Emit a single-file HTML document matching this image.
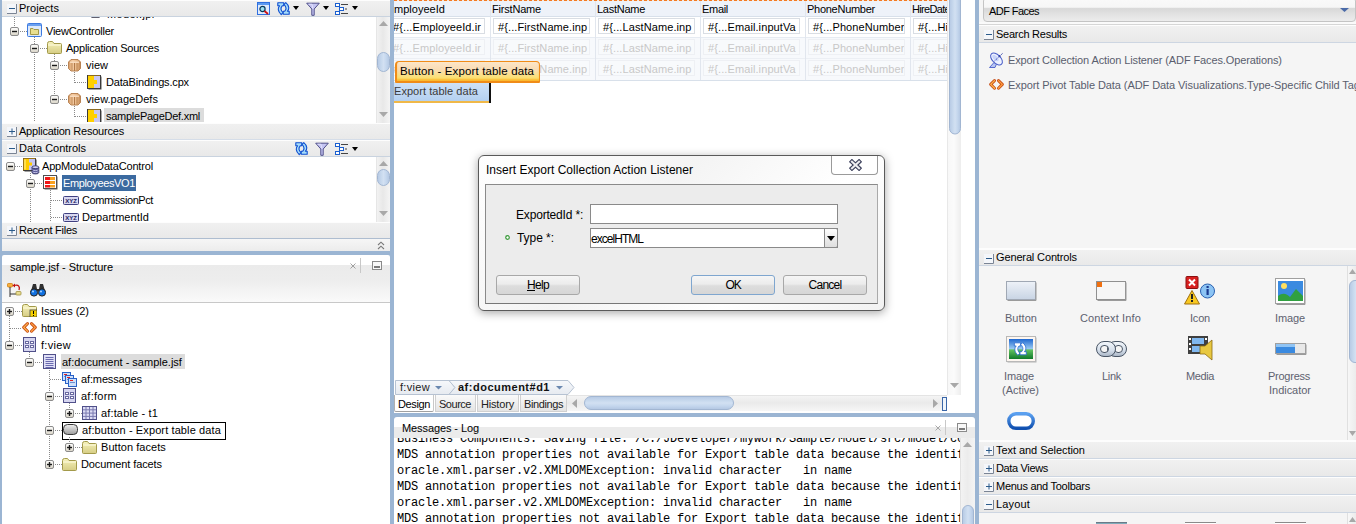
<!DOCTYPE html>
<html><head><meta charset="utf-8"><style>
html,body{margin:0;padding:0;width:1356px;height:524px;overflow:hidden;background:#9bb5d3;}
body>div,body>svg{position:absolute;box-sizing:border-box;}
body{font-family:"Liberation Sans",sans-serif;position:relative;}
</style></head><body>
<div style="left:0px;top:0px;width:2px;height:255px;background:#9bb5d3"></div>
<div style="left:2px;top:0px;width:388px;height:16px;background:linear-gradient(#fdfdfd 0 1px,#f0f0f0 1px,#e9e9e9)"></div>
<div style="left:2px;top:16px;width:388px;height:1px;background:#c9d3df"></div>
<svg style="left:7px;top:4px;" width="10" height="10" viewBox="0 0 10 10"><rect x="0" y="0" width="10" height="10" fill="#f4f6fa"/><path d="M9.5 0 L9.5 9.5 L0 9.5" fill="none" stroke="#7a8494"/><rect x="2" y="4" width="6" height="1" fill="#2a5a8a"/></svg>
<div style="left:19px;top:3px;font-family:'Liberation Sans';font-size:11px;line-height:11px;color:#000;white-space:pre;letter-spacing:0.031px;">Projects</div>
<svg style="left:257px;top:2px;" width="14" height="14" viewBox="0 0 14 14"><rect x="0.5" y="0.5" width="12" height="12" fill="#dfeafc" stroke="#2f6fe0"/><rect x="1" y="1" width="11" height="2" fill="#5c9af0"/><circle cx="5.5" cy="7" r="2.6" fill="#9ee0f0" stroke="#0a3a5a" stroke-width="1.2"/><line x1="7.5" y1="9" x2="11" y2="12" stroke="#d01010" stroke-width="1.8"/></svg>
<svg style="left:277px;top:2px;" width="14" height="14" viewBox="0 0 14 14"><path d="M0.8 0.8 L6.8 0.8 L6.8 3.8 L5.2 3.8 C3.6 5.6 3.6 8.2 6 10.6 L4.2 12.6 C0.6 9.4 0.6 5.6 2.6 3.8 L0.8 3.8 Z" fill="#a6dcfa" stroke="#0f4fd0" stroke-width="1.1" stroke-linejoin="round"/><path d="M12.2 12.2 L6.2 12.2 L6.2 9.2 L7.8 9.2 C9.4 7.4 9.4 4.8 7 2.4 L8.8 0.6 C12.4 3.6 12.4 7.4 10.4 9.2 L12.2 9.2 Z" fill="#a6dcfa" stroke="#0f4fd0" stroke-width="1.1" stroke-linejoin="round"/></svg>
<svg style="left:293px;top:6px;" width="6" height="4" viewBox="0 0 6 4"><path d="M0 0 L6 0 L3 4 Z" fill="#000"/></svg>
<svg style="left:306px;top:2px;" width="14" height="14" viewBox="0 0 14 14"><path d="M0.7 1.2 L13.3 1.2 L8.2 7 L8.2 13.3 L5.8 13.3 L5.8 7 Z" fill="#c4c4f2" stroke="#50508a" stroke-width="1"/><path d="M2.5 2.2 L6 2.2 L6.8 6.5" fill="none" stroke="#e8e8ff" stroke-width="0.8"/></svg>
<svg style="left:323px;top:6px;" width="6" height="4" viewBox="0 0 6 4"><path d="M0 0 L6 0 L3 4 Z" fill="#000"/></svg>
<svg style="left:335px;top:2px;" width="14" height="14" viewBox="0 0 14 14"><rect x="0.5" y="1.5" width="4" height="3" fill="#fff" stroke="#1a5fd0"/><rect x="4.5" y="5.5" width="4" height="3" fill="#fff" stroke="#1a5fd0"/><rect x="0.5" y="9.5" width="4" height="3" fill="#fff" stroke="#1a5fd0"/><rect x="6" y="2" width="7" height="1" fill="#444"/><rect x="10" y="6.5" width="2" height="1" fill="#444"/><rect x="6" y="11" width="7" height="1" fill="#444"/></svg>
<svg style="left:352px;top:6px;" width="6" height="4" viewBox="0 0 6 4"><path d="M0 0 L6 0 L3 4 Z" fill="#000"/></svg>
<div style="left:2px;top:17px;width:374px;height:106px;background:#fff"></div>
<div style="left:2px;top:17px;width:374px;height:6px;overflow:hidden"><svg style="position:absolute;left:86px;top:-12px" width="16" height="14" viewBox="0 0 16 14"><path d="M1 3 L4 0.5 L11 0.5 L14 3 L14 10 L11 12.5 L4 12.5 L1 10 Z" fill="#d8d8e0" stroke="#606070"/><circle cx="5" cy="9" r="2.5" fill="#b0b0c0" stroke="#404050"/><circle cx="10" cy="9" r="2.5" fill="#b0b0c0" stroke="#404050"/></svg><div style="position:absolute;left:105px;top:-8px;font-family:'Liberation Sans';font-size:11px;line-height:11px;white-space:pre;color:#000;letter-spacing:0.4px">Model.jpr</div></div>
<div style="left:14px;top:17px;width:1px;height:1px;background:#8a8a8a"></div>
<div style="left:14px;top:19px;width:1px;height:1px;background:#8a8a8a"></div>
<div style="left:14px;top:21px;width:1px;height:1px;background:#8a8a8a"></div>
<div style="left:14px;top:23px;width:1px;height:1px;background:#8a8a8a"></div>
<div style="left:14px;top:25px;width:1px;height:1px;background:#8a8a8a"></div>
<svg style="left:10px;top:27px;" width="9" height="9" viewBox="0 0 9 9"><defs><linearGradient id="eg" x1="0" y1="0" x2="0" y2="1"><stop offset="0" stop-color="#ffffff"/><stop offset="1" stop-color="#d9d4c6"/></linearGradient></defs><rect x="0.5" y="0.5" width="8" height="8" rx="1.5" fill="url(#eg)" stroke="#8c8c8c"/><rect x="2" y="3.8" width="5" height="1.4" fill="#1a1a1a"/></svg>
<div style="left:20px;top:31px;width:1px;height:1px;background:#8a8a8a"></div>
<div style="left:22px;top:31px;width:1px;height:1px;background:#8a8a8a"></div>
<div style="left:24px;top:31px;width:1px;height:1px;background:#8a8a8a"></div>
<div style="left:26px;top:31px;width:1px;height:1px;background:#8a8a8a"></div>
<svg style="left:27px;top:23px;" width="15" height="14" viewBox="0 0 15 14"><rect x="0.5" y="0.5" width="14" height="13" rx="1" fill="#dce9fb" stroke="#3d7ae0"/><rect x="1" y="1" width="13" height="2" fill="#6aa0f0"/><path d="M3.5 5.5 L6 5.5 L7 6.5 L11.5 6.5 L11.5 11.5 L3.5 11.5 Z" fill="#e8df90" stroke="#a39a4a"/></svg>
<div style="left:46px;top:26px;font-family:'Liberation Sans';font-size:11px;line-height:11px;color:#000;white-space:pre;letter-spacing:-0.238px;">ViewController</div>
<div style="left:34px;top:37px;width:1px;height:1px;background:#8a8a8a"></div>
<div style="left:34px;top:39px;width:1px;height:1px;background:#8a8a8a"></div>
<div style="left:34px;top:41px;width:1px;height:1px;background:#8a8a8a"></div>
<div style="left:34px;top:43px;width:1px;height:1px;background:#8a8a8a"></div>
<svg style="left:30px;top:44px;" width="9" height="9" viewBox="0 0 9 9"><defs><linearGradient id="eg" x1="0" y1="0" x2="0" y2="1"><stop offset="0" stop-color="#ffffff"/><stop offset="1" stop-color="#d9d4c6"/></linearGradient></defs><rect x="0.5" y="0.5" width="8" height="8" rx="1.5" fill="url(#eg)" stroke="#8c8c8c"/><rect x="2" y="3.8" width="5" height="1.4" fill="#1a1a1a"/></svg>
<div style="left:40px;top:48px;width:1px;height:1px;background:#8a8a8a"></div>
<div style="left:42px;top:48px;width:1px;height:1px;background:#8a8a8a"></div>
<div style="left:44px;top:48px;width:1px;height:1px;background:#8a8a8a"></div>
<div style="left:46px;top:48px;width:1px;height:1px;background:#8a8a8a"></div>
<svg style="left:47px;top:41px;" width="15" height="13" viewBox="0 0 15 13"><defs><linearGradient id="fg" x1="0" y1="0" x2="0" y2="1"><stop offset="0" stop-color="#f6f2bc"/><stop offset="1" stop-color="#d6cd84"/></linearGradient></defs><path d="M0.5 2.5 Q0.5 0.5 2.5 0.5 L5.5 0.5 L7 2.5 L13.5 2.5 Q14.5 2.5 14.5 3.5 L14.5 11.5 Q14.5 12.5 13.5 12.5 L1.5 12.5 Q0.5 12.5 0.5 11.5 Z" fill="url(#fg)" stroke="#a39a4a"/><line x1="1" y1="4" x2="14" y2="4" stroke="#fffbe0" stroke-width="1"/></svg>
<div style="left:66px;top:43px;font-family:'Liberation Sans';font-size:11px;line-height:11px;color:#000;white-space:pre;letter-spacing:-0.225px;">Application Sources</div>
<div style="left:34px;top:54px;width:1px;height:1px;background:#8a8a8a"></div>
<div style="left:34px;top:56px;width:1px;height:1px;background:#8a8a8a"></div>
<div style="left:34px;top:58px;width:1px;height:1px;background:#8a8a8a"></div>
<div style="left:34px;top:60px;width:1px;height:1px;background:#8a8a8a"></div>
<div style="left:34px;top:62px;width:1px;height:1px;background:#8a8a8a"></div>
<div style="left:34px;top:64px;width:1px;height:1px;background:#8a8a8a"></div>
<div style="left:34px;top:66px;width:1px;height:1px;background:#8a8a8a"></div>
<div style="left:34px;top:68px;width:1px;height:1px;background:#8a8a8a"></div>
<div style="left:34px;top:70px;width:1px;height:1px;background:#8a8a8a"></div>
<div style="left:34px;top:72px;width:1px;height:1px;background:#8a8a8a"></div>
<div style="left:34px;top:74px;width:1px;height:1px;background:#8a8a8a"></div>
<div style="left:34px;top:76px;width:1px;height:1px;background:#8a8a8a"></div>
<div style="left:34px;top:78px;width:1px;height:1px;background:#8a8a8a"></div>
<div style="left:34px;top:80px;width:1px;height:1px;background:#8a8a8a"></div>
<div style="left:34px;top:82px;width:1px;height:1px;background:#8a8a8a"></div>
<div style="left:34px;top:84px;width:1px;height:1px;background:#8a8a8a"></div>
<div style="left:34px;top:86px;width:1px;height:1px;background:#8a8a8a"></div>
<div style="left:34px;top:88px;width:1px;height:1px;background:#8a8a8a"></div>
<div style="left:34px;top:90px;width:1px;height:1px;background:#8a8a8a"></div>
<div style="left:34px;top:92px;width:1px;height:1px;background:#8a8a8a"></div>
<div style="left:34px;top:94px;width:1px;height:1px;background:#8a8a8a"></div>
<div style="left:34px;top:96px;width:1px;height:1px;background:#8a8a8a"></div>
<div style="left:34px;top:98px;width:1px;height:1px;background:#8a8a8a"></div>
<div style="left:34px;top:100px;width:1px;height:1px;background:#8a8a8a"></div>
<div style="left:34px;top:102px;width:1px;height:1px;background:#8a8a8a"></div>
<div style="left:34px;top:104px;width:1px;height:1px;background:#8a8a8a"></div>
<div style="left:34px;top:106px;width:1px;height:1px;background:#8a8a8a"></div>
<div style="left:34px;top:108px;width:1px;height:1px;background:#8a8a8a"></div>
<div style="left:34px;top:110px;width:1px;height:1px;background:#8a8a8a"></div>
<div style="left:34px;top:112px;width:1px;height:1px;background:#8a8a8a"></div>
<div style="left:34px;top:114px;width:1px;height:1px;background:#8a8a8a"></div>
<div style="left:34px;top:116px;width:1px;height:1px;background:#8a8a8a"></div>
<div style="left:34px;top:118px;width:1px;height:1px;background:#8a8a8a"></div>
<div style="left:34px;top:120px;width:1px;height:1px;background:#8a8a8a"></div>
<div style="left:34px;top:122px;width:1px;height:1px;background:#8a8a8a"></div>
<div style="left:54px;top:54px;width:1px;height:1px;background:#8a8a8a"></div>
<div style="left:54px;top:56px;width:1px;height:1px;background:#8a8a8a"></div>
<div style="left:54px;top:58px;width:1px;height:1px;background:#8a8a8a"></div>
<div style="left:54px;top:60px;width:1px;height:1px;background:#8a8a8a"></div>
<svg style="left:50px;top:61px;" width="9" height="9" viewBox="0 0 9 9"><defs><linearGradient id="eg" x1="0" y1="0" x2="0" y2="1"><stop offset="0" stop-color="#ffffff"/><stop offset="1" stop-color="#d9d4c6"/></linearGradient></defs><rect x="0.5" y="0.5" width="8" height="8" rx="1.5" fill="url(#eg)" stroke="#8c8c8c"/><rect x="2" y="3.8" width="5" height="1.4" fill="#1a1a1a"/></svg>
<div style="left:60px;top:65px;width:1px;height:1px;background:#8a8a8a"></div>
<div style="left:62px;top:65px;width:1px;height:1px;background:#8a8a8a"></div>
<div style="left:64px;top:65px;width:1px;height:1px;background:#8a8a8a"></div>
<div style="left:66px;top:65px;width:1px;height:1px;background:#8a8a8a"></div>
<svg style="left:68px;top:59px;" width="13" height="13" viewBox="0 0 13 13"><defs><linearGradient id="pg" x1="0" y1="0" x2="1" y2="0"><stop offset="0" stop-color="#d49a64"/><stop offset="0.35" stop-color="#f4cca4"/><stop offset="0.7" stop-color="#e8b888"/><stop offset="1" stop-color="#c08652"/></linearGradient></defs><path d="M3 0.5 L10 0.5 L12.5 3 L12.5 9.5 L10 12 L3 12 L0.5 9.5 L0.5 3 Z" fill="url(#pg)" stroke="#b37a48" stroke-width="0.9"/><path d="M2 3.2 L11 3.2" stroke="#fbe2c8" stroke-width="1.2"/><line x1="4" y1="4" x2="4" y2="11.5" stroke="#b8824e" stroke-width="0.9"/><line x1="6.5" y1="4" x2="6.5" y2="12" stroke="#a87040" stroke-width="0.9"/><line x1="9" y1="4" x2="9" y2="11.5" stroke="#b8824e" stroke-width="0.9"/></svg>
<div style="left:86px;top:60px;font-family:'Liberation Sans';font-size:11px;line-height:11px;color:#000;white-space:pre;letter-spacing:0.000px;">view</div>
<div style="left:74px;top:72px;width:1px;height:1px;background:#8a8a8a"></div>
<div style="left:74px;top:74px;width:1px;height:1px;background:#8a8a8a"></div>
<div style="left:74px;top:76px;width:1px;height:1px;background:#8a8a8a"></div>
<div style="left:74px;top:78px;width:1px;height:1px;background:#8a8a8a"></div>
<div style="left:74px;top:80px;width:1px;height:1px;background:#8a8a8a"></div>
<div style="left:74px;top:82px;width:1px;height:1px;background:#8a8a8a"></div>
<div style="left:75px;top:82px;width:1px;height:1px;background:#8a8a8a"></div>
<div style="left:77px;top:82px;width:1px;height:1px;background:#8a8a8a"></div>
<div style="left:79px;top:82px;width:1px;height:1px;background:#8a8a8a"></div>
<div style="left:81px;top:82px;width:1px;height:1px;background:#8a8a8a"></div>
<div style="left:83px;top:82px;width:1px;height:1px;background:#8a8a8a"></div>
<div style="left:85px;top:82px;width:1px;height:1px;background:#8a8a8a"></div>
<svg style="left:87px;top:75px;" width="15" height="15" viewBox="0 0 15 15"><rect x="1.5" y="1.5" width="13" height="13" fill="#505050"/><rect x="0.5" y="0.5" width="13" height="13" fill="#c8c8f4" stroke="#3a3a3a"/><path d="M1 1 L7 1 L7 5 L10 5 L10 9 L7 9 L7 13 L1 13 Z" fill="#ffd000"/><line x1="1" y1="0.5" x2="13" y2="0.5" stroke="#8a6a20"/></svg>
<div style="left:106px;top:77px;font-family:'Liberation Sans';font-size:11px;line-height:11px;color:#000;white-space:pre;letter-spacing:-0.166px;">DataBindings.cpx</div>
<div style="left:54px;top:71px;width:1px;height:1px;background:#8a8a8a"></div>
<div style="left:54px;top:73px;width:1px;height:1px;background:#8a8a8a"></div>
<div style="left:54px;top:75px;width:1px;height:1px;background:#8a8a8a"></div>
<div style="left:54px;top:77px;width:1px;height:1px;background:#8a8a8a"></div>
<div style="left:54px;top:79px;width:1px;height:1px;background:#8a8a8a"></div>
<div style="left:54px;top:81px;width:1px;height:1px;background:#8a8a8a"></div>
<div style="left:54px;top:83px;width:1px;height:1px;background:#8a8a8a"></div>
<div style="left:54px;top:85px;width:1px;height:1px;background:#8a8a8a"></div>
<div style="left:54px;top:87px;width:1px;height:1px;background:#8a8a8a"></div>
<div style="left:54px;top:89px;width:1px;height:1px;background:#8a8a8a"></div>
<div style="left:54px;top:91px;width:1px;height:1px;background:#8a8a8a"></div>
<div style="left:54px;top:93px;width:1px;height:1px;background:#8a8a8a"></div>
<svg style="left:50px;top:95px;" width="9" height="9" viewBox="0 0 9 9"><defs><linearGradient id="eg" x1="0" y1="0" x2="0" y2="1"><stop offset="0" stop-color="#ffffff"/><stop offset="1" stop-color="#d9d4c6"/></linearGradient></defs><rect x="0.5" y="0.5" width="8" height="8" rx="1.5" fill="url(#eg)" stroke="#8c8c8c"/><rect x="2" y="3.8" width="5" height="1.4" fill="#1a1a1a"/></svg>
<div style="left:60px;top:99px;width:1px;height:1px;background:#8a8a8a"></div>
<div style="left:62px;top:99px;width:1px;height:1px;background:#8a8a8a"></div>
<div style="left:64px;top:99px;width:1px;height:1px;background:#8a8a8a"></div>
<div style="left:66px;top:99px;width:1px;height:1px;background:#8a8a8a"></div>
<svg style="left:68px;top:93px;" width="13" height="13" viewBox="0 0 13 13"><defs><linearGradient id="pg" x1="0" y1="0" x2="1" y2="0"><stop offset="0" stop-color="#d49a64"/><stop offset="0.35" stop-color="#f4cca4"/><stop offset="0.7" stop-color="#e8b888"/><stop offset="1" stop-color="#c08652"/></linearGradient></defs><path d="M3 0.5 L10 0.5 L12.5 3 L12.5 9.5 L10 12 L3 12 L0.5 9.5 L0.5 3 Z" fill="url(#pg)" stroke="#b37a48" stroke-width="0.9"/><path d="M2 3.2 L11 3.2" stroke="#fbe2c8" stroke-width="1.2"/><line x1="4" y1="4" x2="4" y2="11.5" stroke="#b8824e" stroke-width="0.9"/><line x1="6.5" y1="4" x2="6.5" y2="12" stroke="#a87040" stroke-width="0.9"/><line x1="9" y1="4" x2="9" y2="11.5" stroke="#b8824e" stroke-width="0.9"/></svg>
<div style="left:86px;top:94px;font-family:'Liberation Sans';font-size:11px;line-height:11px;color:#000;white-space:pre;letter-spacing:0.032px;">view.pageDefs</div>
<div style="left:74px;top:106px;width:1px;height:1px;background:#8a8a8a"></div>
<div style="left:74px;top:108px;width:1px;height:1px;background:#8a8a8a"></div>
<div style="left:74px;top:110px;width:1px;height:1px;background:#8a8a8a"></div>
<div style="left:74px;top:112px;width:1px;height:1px;background:#8a8a8a"></div>
<div style="left:74px;top:114px;width:1px;height:1px;background:#8a8a8a"></div>
<div style="left:74px;top:116px;width:1px;height:1px;background:#8a8a8a"></div>
<div style="left:75px;top:116px;width:1px;height:1px;background:#8a8a8a"></div>
<div style="left:77px;top:116px;width:1px;height:1px;background:#8a8a8a"></div>
<div style="left:79px;top:116px;width:1px;height:1px;background:#8a8a8a"></div>
<div style="left:81px;top:116px;width:1px;height:1px;background:#8a8a8a"></div>
<div style="left:83px;top:116px;width:1px;height:1px;background:#8a8a8a"></div>
<div style="left:85px;top:116px;width:1px;height:1px;background:#8a8a8a"></div>
<svg style="left:87px;top:109px;" width="15" height="15" viewBox="0 0 15 15"><rect x="1.5" y="1.5" width="13" height="13" fill="#505050"/><rect x="0.5" y="0.5" width="13" height="13" fill="#c8c8f4" stroke="#3a3a3a"/><path d="M1 1 L7 1 L7 5 L10 5 L10 9 L7 9 L7 13 L1 13 Z" fill="#ffd000"/><line x1="1" y1="0.5" x2="13" y2="0.5" stroke="#8a6a20"/></svg>
<div style="left:104px;top:108px;width:100px;height:15px;background:#dcdcdc"></div>
<div style="left:106px;top:111px;font-family:'Liberation Sans';font-size:11px;line-height:11px;color:#000;white-space:pre;letter-spacing:-0.263px;">samplePageDef.xml</div>
<div style="left:2px;top:122px;width:374px;height:1px;background:#fff"></div>
<div style="left:376px;top:17px;width:14px;height:106px;background:linear-gradient(90deg,#f4f4f4,#e8e8e8 50%,#f4f4f4)"></div>
<div style="left:376px;top:17px;width:1px;height:106px;background:#e6e6e6"></div>
<svg style="left:379px;top:21px;" width="9" height="5" viewBox="0 0 9 5"><path d="M0 5 L4.5 0 L9 5 Z" fill="#a8a8a8"/></svg>
<svg style="left:379px;top:112px;" width="9" height="5" viewBox="0 0 9 5"><path d="M0 0 L4.5 5 L9 0 Z" fill="#a8a8a8"/></svg>
<svg style="left:377px;top:52px;" width="13" height="20" viewBox="0 0 13 20"><defs><linearGradient id="tg52" x1="0" y1="0" x2="1" y2="0"><stop offset="0" stop-color="#b6c9e4"/><stop offset="0.35" stop-color="#c9daee"/><stop offset="0.5" stop-color="#d2e0f2"/><stop offset="0.7" stop-color="#c6d8ee"/><stop offset="1" stop-color="#b2c6e2"/></linearGradient></defs><rect x="0.5" y="0.5" width="12" height="19" rx="6" fill="url(#tg52)" stroke="#a2b6d2"/></svg>
<div style="left:2px;top:123px;width:388px;height:16px;background:linear-gradient(#fdfdfd 0 1px,#f0f0f0 1px,#e9e9e9)"></div>
<div style="left:2px;top:139px;width:388px;height:1px;background:#d5dde8"></div>
<svg style="left:7px;top:127px;" width="10" height="10" viewBox="0 0 10 10"><rect x="0" y="0" width="10" height="10" fill="#f4f6fa"/><path d="M9.5 0 L9.5 9.5 L0 9.5" fill="none" stroke="#7a8494"/><rect x="2" y="4" width="6" height="1" fill="#2a5a8a"/><rect x="4.5" y="1.5" width="1" height="6" fill="#2a5a8a"/></svg>
<div style="left:19px;top:126px;font-family:'Liberation Sans';font-size:11px;line-height:11px;color:#000;white-space:pre;letter-spacing:-0.214px;">Application Resources</div>
<div style="left:2px;top:140px;width:388px;height:16px;background:linear-gradient(#fdfdfd 0 1px,#f0f0f0 1px,#e9e9e9)"></div>
<div style="left:2px;top:156px;width:388px;height:1px;background:#c9d3df"></div>
<svg style="left:7px;top:144px;" width="10" height="10" viewBox="0 0 10 10"><rect x="0" y="0" width="10" height="10" fill="#f4f6fa"/><path d="M9.5 0 L9.5 9.5 L0 9.5" fill="none" stroke="#7a8494"/><rect x="2" y="4" width="6" height="1" fill="#2a5a8a"/></svg>
<div style="left:19px;top:143px;font-family:'Liberation Sans';font-size:11px;line-height:11px;color:#000;white-space:pre;letter-spacing:-0.022px;">Data Controls</div>
<svg style="left:295px;top:142px;" width="14" height="14" viewBox="0 0 14 14"><path d="M0.8 0.8 L6.8 0.8 L6.8 3.8 L5.2 3.8 C3.6 5.6 3.6 8.2 6 10.6 L4.2 12.6 C0.6 9.4 0.6 5.6 2.6 3.8 L0.8 3.8 Z" fill="#a6dcfa" stroke="#0f4fd0" stroke-width="1.1" stroke-linejoin="round"/><path d="M12.2 12.2 L6.2 12.2 L6.2 9.2 L7.8 9.2 C9.4 7.4 9.4 4.8 7 2.4 L8.8 0.6 C12.4 3.6 12.4 7.4 10.4 9.2 L12.2 9.2 Z" fill="#a6dcfa" stroke="#0f4fd0" stroke-width="1.1" stroke-linejoin="round"/></svg>
<svg style="left:315px;top:142px;" width="14" height="14" viewBox="0 0 14 14"><path d="M0.7 1.2 L13.3 1.2 L8.2 7 L8.2 13.3 L5.8 13.3 L5.8 7 Z" fill="#c4c4f2" stroke="#50508a" stroke-width="1"/><path d="M2.5 2.2 L6 2.2 L6.8 6.5" fill="none" stroke="#e8e8ff" stroke-width="0.8"/></svg>
<svg style="left:335px;top:142px;" width="14" height="14" viewBox="0 0 14 14"><rect x="0.5" y="1.5" width="4" height="3" fill="#fff" stroke="#1a5fd0"/><rect x="4.5" y="5.5" width="4" height="3" fill="#fff" stroke="#1a5fd0"/><rect x="0.5" y="9.5" width="4" height="3" fill="#fff" stroke="#1a5fd0"/><rect x="6" y="2" width="7" height="1" fill="#444"/><rect x="10" y="6.5" width="2" height="1" fill="#444"/><rect x="6" y="11" width="7" height="1" fill="#444"/></svg>
<svg style="left:352px;top:147px;" width="6" height="4" viewBox="0 0 6 4"><path d="M0 0 L6 0 L3 4 Z" fill="#000"/></svg>
<div style="left:2px;top:157px;width:374px;height:65px;background:#fff"></div>
<svg style="left:6px;top:162px;" width="9" height="9" viewBox="0 0 9 9"><defs><linearGradient id="eg" x1="0" y1="0" x2="0" y2="1"><stop offset="0" stop-color="#ffffff"/><stop offset="1" stop-color="#d9d4c6"/></linearGradient></defs><rect x="0.5" y="0.5" width="8" height="8" rx="1.5" fill="url(#eg)" stroke="#8c8c8c"/><rect x="2" y="3.8" width="5" height="1.4" fill="#1a1a1a"/></svg>
<div style="left:15px;top:166px;width:1px;height:1px;background:#8a8a8a"></div>
<div style="left:17px;top:166px;width:1px;height:1px;background:#8a8a8a"></div>
<div style="left:19px;top:166px;width:1px;height:1px;background:#8a8a8a"></div>
<div style="left:21px;top:166px;width:1px;height:1px;background:#8a8a8a"></div>
<svg style="left:23px;top:158px;" width="17" height="17" viewBox="0 0 17 17"><rect x="1.5" y="1.5" width="12" height="12" fill="#404040"/><rect x="0.5" y="0.5" width="12" height="12" fill="#c4c4f2" stroke="#3a3a3a"/><line x1="0.5" y1="0.5" x2="12.5" y2="0.5" stroke="#9a7418"/><line x1="0.5" y1="0.5" x2="0.5" y2="12.5" stroke="#9a7418"/><path d="M1 1 L6 1 L6 4.5 L9 4.5 L9 7.5 L6 7.5 L6 12 L1 12 Z" fill="#ffcc00"/><rect x="1.5" y="1.5" width="1" height="10" fill="#fff2a0"/><path d="M9 9.2 L9 14.6 A3.4 1.4 0 0 0 15.8 14.6 L15.8 9.2 Z" fill="#5a5a98" stroke="#2e2e60" stroke-width="0.8"/><ellipse cx="12.4" cy="9.2" rx="3.4" ry="1.4" fill="#d0d0f4" stroke="#2e2e60" stroke-width="0.8"/><path d="M9.8 11.6 A2.6 1 0 0 0 15 11.6" fill="none" stroke="#d8d8f8" stroke-width="0.8"/><path d="M9.8 13.6 A2.6 1 0 0 0 15 13.6" fill="none" stroke="#d8d8f8" stroke-width="0.8"/></svg>
<div style="left:42px;top:161px;font-family:'Liberation Sans';font-size:11px;line-height:11px;color:#000;white-space:pre;letter-spacing:-0.170px;">AppModuleDataControl</div>
<div style="left:30px;top:173px;width:1px;height:1px;background:#8a8a8a"></div>
<div style="left:30px;top:175px;width:1px;height:1px;background:#8a8a8a"></div>
<div style="left:30px;top:177px;width:1px;height:1px;background:#8a8a8a"></div>
<div style="left:30px;top:179px;width:1px;height:1px;background:#8a8a8a"></div>
<div style="left:30px;top:181px;width:1px;height:1px;background:#8a8a8a"></div>
<div style="left:30px;top:183px;width:1px;height:1px;background:#8a8a8a"></div>
<div style="left:30px;top:185px;width:1px;height:1px;background:#8a8a8a"></div>
<div style="left:30px;top:187px;width:1px;height:1px;background:#8a8a8a"></div>
<div style="left:30px;top:189px;width:1px;height:1px;background:#8a8a8a"></div>
<div style="left:30px;top:191px;width:1px;height:1px;background:#8a8a8a"></div>
<div style="left:30px;top:193px;width:1px;height:1px;background:#8a8a8a"></div>
<div style="left:30px;top:195px;width:1px;height:1px;background:#8a8a8a"></div>
<div style="left:30px;top:197px;width:1px;height:1px;background:#8a8a8a"></div>
<div style="left:30px;top:199px;width:1px;height:1px;background:#8a8a8a"></div>
<div style="left:30px;top:201px;width:1px;height:1px;background:#8a8a8a"></div>
<div style="left:30px;top:203px;width:1px;height:1px;background:#8a8a8a"></div>
<div style="left:30px;top:205px;width:1px;height:1px;background:#8a8a8a"></div>
<div style="left:30px;top:207px;width:1px;height:1px;background:#8a8a8a"></div>
<div style="left:30px;top:209px;width:1px;height:1px;background:#8a8a8a"></div>
<div style="left:30px;top:211px;width:1px;height:1px;background:#8a8a8a"></div>
<div style="left:30px;top:213px;width:1px;height:1px;background:#8a8a8a"></div>
<div style="left:30px;top:215px;width:1px;height:1px;background:#8a8a8a"></div>
<div style="left:30px;top:217px;width:1px;height:1px;background:#8a8a8a"></div>
<div style="left:30px;top:219px;width:1px;height:1px;background:#8a8a8a"></div>
<div style="left:30px;top:221px;width:1px;height:1px;background:#8a8a8a"></div>
<svg style="left:26px;top:179px;" width="9" height="9" viewBox="0 0 9 9"><defs><linearGradient id="eg" x1="0" y1="0" x2="0" y2="1"><stop offset="0" stop-color="#ffffff"/><stop offset="1" stop-color="#d9d4c6"/></linearGradient></defs><rect x="0.5" y="0.5" width="8" height="8" rx="1.5" fill="url(#eg)" stroke="#8c8c8c"/><rect x="2" y="3.8" width="5" height="1.4" fill="#1a1a1a"/></svg>
<div style="left:35px;top:183px;width:1px;height:1px;background:#8a8a8a"></div>
<div style="left:37px;top:183px;width:1px;height:1px;background:#8a8a8a"></div>
<div style="left:39px;top:183px;width:1px;height:1px;background:#8a8a8a"></div>
<div style="left:41px;top:183px;width:1px;height:1px;background:#8a8a8a"></div>
<svg style="left:43px;top:175px;" width="15" height="15" viewBox="0 0 15 15"><rect x="1.5" y="1.5" width="13" height="13" fill="#606060"/><rect x="0.5" y="0.5" width="13" height="13" fill="#fff" stroke="#505050"/><rect x="2" y="2" width="5" height="3" fill="#f01818"/><rect x="7" y="2" width="5" height="3" fill="#f8a020"/><rect x="2" y="6" width="5" height="3" fill="#f01818"/><rect x="7" y="6" width="5" height="3" fill="#f8a020"/><rect x="2" y="10" width="5" height="2.5" fill="#f01818"/><rect x="7" y="10" width="5" height="2.5" fill="#f8a020"/></svg>
<div style="left:62px;top:175px;width:74px;height:16px;background:#3b6aa0"></div>
<div style="left:63px;top:178px;font-family:'Liberation Sans';font-size:11px;line-height:11px;color:#fff;white-space:pre;letter-spacing:-0.372px;">EmployeesVO1</div>
<div style="left:50px;top:190px;width:1px;height:1px;background:#8a8a8a"></div>
<div style="left:50px;top:192px;width:1px;height:1px;background:#8a8a8a"></div>
<div style="left:50px;top:194px;width:1px;height:1px;background:#8a8a8a"></div>
<div style="left:50px;top:196px;width:1px;height:1px;background:#8a8a8a"></div>
<div style="left:50px;top:198px;width:1px;height:1px;background:#8a8a8a"></div>
<div style="left:50px;top:200px;width:1px;height:1px;background:#8a8a8a"></div>
<div style="left:50px;top:202px;width:1px;height:1px;background:#8a8a8a"></div>
<div style="left:50px;top:204px;width:1px;height:1px;background:#8a8a8a"></div>
<div style="left:50px;top:206px;width:1px;height:1px;background:#8a8a8a"></div>
<div style="left:50px;top:208px;width:1px;height:1px;background:#8a8a8a"></div>
<div style="left:50px;top:210px;width:1px;height:1px;background:#8a8a8a"></div>
<div style="left:50px;top:212px;width:1px;height:1px;background:#8a8a8a"></div>
<div style="left:50px;top:214px;width:1px;height:1px;background:#8a8a8a"></div>
<div style="left:50px;top:216px;width:1px;height:1px;background:#8a8a8a"></div>
<div style="left:50px;top:218px;width:1px;height:1px;background:#8a8a8a"></div>
<div style="left:50px;top:220px;width:1px;height:1px;background:#8a8a8a"></div>
<div style="left:51px;top:200px;width:1px;height:1px;background:#8a8a8a"></div>
<div style="left:53px;top:200px;width:1px;height:1px;background:#8a8a8a"></div>
<div style="left:55px;top:200px;width:1px;height:1px;background:#8a8a8a"></div>
<div style="left:57px;top:200px;width:1px;height:1px;background:#8a8a8a"></div>
<div style="left:59px;top:200px;width:1px;height:1px;background:#8a8a8a"></div>
<div style="left:61px;top:200px;width:1px;height:1px;background:#8a8a8a"></div>
<svg style="left:63px;top:196px;" width="16" height="9" viewBox="0 0 16 9"><rect x="0.5" y="0.5" width="15" height="8" rx="1" fill="#d8d8f0" stroke="#404080"/><text x="8" y="7" font-family="Liberation Sans" font-size="6" font-weight="bold" text-anchor="middle" fill="#202060">XYZ</text></svg>
<div style="left:82px;top:195px;font-family:'Liberation Sans';font-size:11px;line-height:11px;color:#000;white-space:pre;letter-spacing:-0.416px;">CommissionPct</div>
<div style="left:51px;top:217px;width:1px;height:1px;background:#8a8a8a"></div>
<div style="left:53px;top:217px;width:1px;height:1px;background:#8a8a8a"></div>
<div style="left:55px;top:217px;width:1px;height:1px;background:#8a8a8a"></div>
<div style="left:57px;top:217px;width:1px;height:1px;background:#8a8a8a"></div>
<div style="left:59px;top:217px;width:1px;height:1px;background:#8a8a8a"></div>
<div style="left:61px;top:217px;width:1px;height:1px;background:#8a8a8a"></div>
<svg style="left:63px;top:213px;" width="16" height="9" viewBox="0 0 16 9"><rect x="0.5" y="0.5" width="15" height="8" rx="1" fill="#d8d8f0" stroke="#404080"/><text x="8" y="7" font-family="Liberation Sans" font-size="6" font-weight="bold" text-anchor="middle" fill="#202060">XYZ</text></svg>
<div style="left:82px;top:212px;font-family:'Liberation Sans';font-size:11px;line-height:11px;color:#000;white-space:pre;letter-spacing:0.026px;">DepartmentId</div>
<div style="left:376px;top:157px;width:14px;height:65px;background:linear-gradient(90deg,#f4f4f4,#e8e8e8 50%,#f4f4f4)"></div>
<div style="left:376px;top:157px;width:1px;height:65px;background:#e6e6e6"></div>
<svg style="left:379px;top:161px;" width="9" height="5" viewBox="0 0 9 5"><path d="M0 5 L4.5 0 L9 5 Z" fill="#a8a8a8"/></svg>
<svg style="left:379px;top:211px;" width="9" height="5" viewBox="0 0 9 5"><path d="M0 0 L4.5 5 L9 0 Z" fill="#a8a8a8"/></svg>
<svg style="left:377px;top:169px;" width="13" height="17" viewBox="0 0 13 17"><defs><linearGradient id="tg169" x1="0" y1="0" x2="1" y2="0"><stop offset="0" stop-color="#b6c9e4"/><stop offset="0.35" stop-color="#c9daee"/><stop offset="0.5" stop-color="#d2e0f2"/><stop offset="0.7" stop-color="#c6d8ee"/><stop offset="1" stop-color="#b2c6e2"/></linearGradient></defs><rect x="0.5" y="0.5" width="12" height="16" rx="6" fill="url(#tg169)" stroke="#a2b6d2"/></svg>
<div style="left:2px;top:222px;width:388px;height:16px;background:linear-gradient(#fdfdfd 0 1px,#f0f0f0 1px,#e9e9e9)"></div>
<div style="left:2px;top:238px;width:388px;height:1px;background:#aebdd0"></div>
<svg style="left:7px;top:226px;" width="10" height="10" viewBox="0 0 10 10"><rect x="0" y="0" width="10" height="10" fill="#f4f6fa"/><path d="M9.5 0 L9.5 9.5 L0 9.5" fill="none" stroke="#7a8494"/><rect x="2" y="4" width="6" height="1" fill="#2a5a8a"/><rect x="4.5" y="1.5" width="1" height="6" fill="#2a5a8a"/></svg>
<div style="left:19px;top:225px;font-family:'Liberation Sans';font-size:11px;line-height:11px;color:#000;white-space:pre;letter-spacing:-0.263px;">Recent Files</div>
<div style="left:2px;top:239px;width:388px;height:12px;background:linear-gradient(#f6f6f6,#ececec)"></div>
<svg style="left:377px;top:241px;" width="8" height="9" viewBox="0 0 8 9"><path d="M1 4 L4 1.2 L7 4" fill="none" stroke="#7a7a7a" stroke-width="1.1"/><path d="M1 8 L4 5.2 L7 8" fill="none" stroke="#7a7a7a" stroke-width="1.1"/></svg>
<div style="left:0px;top:251px;width:394px;height:4px;background:#9bb5d3"></div>
<div style="left:0px;top:255px;width:2px;height:269px;background:#9bb5d3"></div>
<div style="left:2px;top:255px;width:388px;height:269px;background:#fff;border-top-left-radius:2px;border-top-right-radius:2px"></div>
<div style="left:2px;top:265px;width:388px;height:37px;background:linear-gradient(#ebebeb,#ededed 40%,#fafafa)"></div>
<div style="left:2px;top:302px;width:388px;height:1px;background:#c8c8c8"></div>
<div style="left:10px;top:262px;font-family:'Liberation Sans';font-size:11px;line-height:11px;color:#000;white-space:pre;letter-spacing:-0.044px;">sample.jsf - Structure</div>
<svg style="left:350px;top:263px;" width="6" height="6" viewBox="0 0 6 6"><path d="M0.5 0.5 L5.5 5.5 M5.5 0.5 L0.5 5.5" stroke="#a0a0a0" stroke-width="1"/></svg>
<div style="left:360px;top:258px;width:1px;height:15px;background:#c8c8c8"></div>
<svg style="left:372px;top:261px;" width="10" height="9" viewBox="0 0 10 9"><rect x="0.5" y="0.5" width="9" height="8" fill="#f8f8f8" stroke="#8a8a8a"/><rect x="2" y="5" width="6" height="2" fill="#7a7a7a"/></svg>
<svg style="left:7px;top:283px;" width="15" height="15" viewBox="0 0 15 15"><rect x="0.5" y="0.5" width="5" height="3.5" rx="0.8" fill="#f8b040" stroke="#d08010" stroke-width="0.8"/><path d="M3 4 L3 14 M3 11 L9 11" stroke="#333" stroke-width="1"/><rect x="9" y="8.5" width="5" height="3.5" rx="0.8" fill="#e8dc90" stroke="#a09040" stroke-width="0.8"/><path d="M7 2.5 C12 1 13 4 12 7" fill="none" stroke="#c01010" stroke-width="1.3"/><path d="M5.5 2.5 L8 0.5 L8 4.5 Z" fill="#c01010"/></svg>
<svg style="left:30px;top:283px;" width="16" height="14" viewBox="0 0 16 14"><path d="M3 1 L6 1 L7 6 L9 6 L10 1 L13 1 L15 8 L9 8 L7 8 L1 8 Z" fill="#303030"/><circle cx="4" cy="9.5" r="3.6" fill="#1070e0" stroke="#202020" stroke-width="1"/><circle cx="12" cy="9.5" r="3.6" fill="#1070e0" stroke="#202020" stroke-width="1"/><circle cx="3" cy="8.5" r="0.9" fill="#bfe0ff"/><circle cx="11" cy="8.5" r="0.9" fill="#bfe0ff"/></svg>
<div style="left:9px;top:316px;width:1px;height:1px;background:#8a8a8a"></div>
<div style="left:9px;top:318px;width:1px;height:1px;background:#8a8a8a"></div>
<div style="left:9px;top:320px;width:1px;height:1px;background:#8a8a8a"></div>
<div style="left:9px;top:322px;width:1px;height:1px;background:#8a8a8a"></div>
<div style="left:9px;top:324px;width:1px;height:1px;background:#8a8a8a"></div>
<div style="left:9px;top:326px;width:1px;height:1px;background:#8a8a8a"></div>
<div style="left:9px;top:328px;width:1px;height:1px;background:#8a8a8a"></div>
<div style="left:9px;top:330px;width:1px;height:1px;background:#8a8a8a"></div>
<div style="left:9px;top:332px;width:1px;height:1px;background:#8a8a8a"></div>
<div style="left:9px;top:334px;width:1px;height:1px;background:#8a8a8a"></div>
<div style="left:9px;top:336px;width:1px;height:1px;background:#8a8a8a"></div>
<div style="left:9px;top:338px;width:1px;height:1px;background:#8a8a8a"></div>
<div style="left:9px;top:340px;width:1px;height:1px;background:#8a8a8a"></div>
<svg style="left:5px;top:307px;" width="9" height="9" viewBox="0 0 9 9"><defs><linearGradient id="eg" x1="0" y1="0" x2="0" y2="1"><stop offset="0" stop-color="#ffffff"/><stop offset="1" stop-color="#d9d4c6"/></linearGradient></defs><rect x="0.5" y="0.5" width="8" height="8" rx="1.5" fill="url(#eg)" stroke="#8c8c8c"/><rect x="2" y="3.8" width="5" height="1.4" fill="#1a1a1a"/><rect x="3.8" y="2" width="1.4" height="5" fill="#1a1a1a"/></svg>
<div style="left:15px;top:311px;width:1px;height:1px;background:#8a8a8a"></div>
<div style="left:17px;top:311px;width:1px;height:1px;background:#8a8a8a"></div>
<div style="left:19px;top:311px;width:1px;height:1px;background:#8a8a8a"></div>
<div style="left:21px;top:311px;width:1px;height:1px;background:#8a8a8a"></div>
<svg style="left:22px;top:304px;" width="15" height="13" viewBox="0 0 15 13"><defs><linearGradient id="fg" x1="0" y1="0" x2="0" y2="1"><stop offset="0" stop-color="#f6f2bc"/><stop offset="1" stop-color="#d6cd84"/></linearGradient></defs><path d="M0.5 2.5 Q0.5 0.5 2.5 0.5 L5.5 0.5 L7 2.5 L13.5 2.5 Q14.5 2.5 14.5 3.5 L14.5 11.5 Q14.5 12.5 13.5 12.5 L1.5 12.5 Q0.5 12.5 0.5 11.5 Z" fill="url(#fg)" stroke="#a39a4a"/><line x1="1" y1="4" x2="14" y2="4" stroke="#fffbe0" stroke-width="1"/><rect x="8" y="6" width="7" height="7" fill="#f5d000" stroke="#444" stroke-width="0.8"/><rect x="11" y="7" width="1" height="3" fill="#000"/><rect x="11" y="11" width="1" height="1" fill="#000"/></svg>
<div style="left:41px;top:306px;font-family:'Liberation Sans';font-size:11px;line-height:11px;color:#000;white-space:pre;letter-spacing:-0.031px;">Issues (2)</div>
<div style="left:10px;top:328px;width:1px;height:1px;background:#8a8a8a"></div>
<div style="left:12px;top:328px;width:1px;height:1px;background:#8a8a8a"></div>
<div style="left:14px;top:328px;width:1px;height:1px;background:#8a8a8a"></div>
<div style="left:16px;top:328px;width:1px;height:1px;background:#8a8a8a"></div>
<div style="left:18px;top:328px;width:1px;height:1px;background:#8a8a8a"></div>
<div style="left:20px;top:328px;width:1px;height:1px;background:#8a8a8a"></div>
<svg style="left:22px;top:322px;" width="16" height="12" viewBox="0 0 16 12"><path d="M5.5 1.6 L1.7 5.4 L5.5 9.2" fill="none" stroke="#c8501a" stroke-width="3" stroke-linecap="round" stroke-linejoin="round"/><path d="M9.5 1.6 L13.3 5.4 L9.5 9.2" fill="none" stroke="#c8501a" stroke-width="3" stroke-linecap="round" stroke-linejoin="round"/><path d="M5.5 1.6 L1.7 5.4 L5.5 9.2" fill="none" stroke="#ffb24a" stroke-width="1.3" stroke-linecap="round" stroke-linejoin="round"/><path d="M9.5 1.6 L13.3 5.4 L9.5 9.2" fill="none" stroke="#ffa040" stroke-width="1.3" stroke-linecap="round" stroke-linejoin="round"/></svg>
<div style="left:41px;top:323px;font-family:'Liberation Sans';font-size:11px;line-height:11px;color:#000;white-space:pre;letter-spacing:-0.195px;">html</div>
<svg style="left:5px;top:341px;" width="9" height="9" viewBox="0 0 9 9"><defs><linearGradient id="eg" x1="0" y1="0" x2="0" y2="1"><stop offset="0" stop-color="#ffffff"/><stop offset="1" stop-color="#d9d4c6"/></linearGradient></defs><rect x="0.5" y="0.5" width="8" height="8" rx="1.5" fill="url(#eg)" stroke="#8c8c8c"/><rect x="2" y="3.8" width="5" height="1.4" fill="#1a1a1a"/></svg>
<div style="left:15px;top:345px;width:1px;height:1px;background:#8a8a8a"></div>
<div style="left:17px;top:345px;width:1px;height:1px;background:#8a8a8a"></div>
<div style="left:19px;top:345px;width:1px;height:1px;background:#8a8a8a"></div>
<div style="left:21px;top:345px;width:1px;height:1px;background:#8a8a8a"></div>
<svg style="left:23px;top:337px;" width="13" height="15" viewBox="0 0 13 15"><rect x="0.5" y="0.5" width="12" height="14" fill="#d6d6f0" stroke="#50508a"/><rect x="2.5" y="4.5" width="3" height="2" fill="#fff" stroke="#6a6aa0"/><rect x="7.5" y="4.5" width="3" height="2" fill="#fff" stroke="#6a6aa0"/><rect x="2.5" y="8.5" width="3" height="2" fill="#fff" stroke="#6a6aa0"/><rect x="7.5" y="8.5" width="3" height="2" fill="#fff" stroke="#6a6aa0"/></svg>
<div style="left:41px;top:340px;font-family:'Liberation Sans';font-size:11px;line-height:11px;color:#000;white-space:pre;letter-spacing:0.312px;">f:view</div>
<div style="left:29px;top:352px;width:1px;height:1px;background:#8a8a8a"></div>
<div style="left:29px;top:354px;width:1px;height:1px;background:#8a8a8a"></div>
<div style="left:29px;top:356px;width:1px;height:1px;background:#8a8a8a"></div>
<svg style="left:25px;top:358px;" width="9" height="9" viewBox="0 0 9 9"><defs><linearGradient id="eg" x1="0" y1="0" x2="0" y2="1"><stop offset="0" stop-color="#ffffff"/><stop offset="1" stop-color="#d9d4c6"/></linearGradient></defs><rect x="0.5" y="0.5" width="8" height="8" rx="1.5" fill="url(#eg)" stroke="#8c8c8c"/><rect x="2" y="3.8" width="5" height="1.4" fill="#1a1a1a"/></svg>
<div style="left:35px;top:362px;width:1px;height:1px;background:#8a8a8a"></div>
<div style="left:37px;top:362px;width:1px;height:1px;background:#8a8a8a"></div>
<div style="left:39px;top:362px;width:1px;height:1px;background:#8a8a8a"></div>
<div style="left:41px;top:362px;width:1px;height:1px;background:#8a8a8a"></div>
<svg style="left:43px;top:354px;" width="13" height="15" viewBox="0 0 13 15"><rect x="0.5" y="0.5" width="12" height="14" fill="#e0e0f6" stroke="#50508a"/><rect x="2.5" y="3" width="8" height="1" fill="#6a6ab0"/><rect x="2.5" y="5" width="8" height="1" fill="#6a6ab0"/><rect x="2.5" y="7" width="8" height="1" fill="#6a6ab0"/><rect x="2.5" y="9" width="8" height="1" fill="#6a6ab0"/><rect x="2.5" y="11" width="8" height="1" fill="#6a6ab0"/><rect x="2.5" y="13" width="8" height="1" fill="#6a6ab0"/></svg>
<div style="left:61px;top:354px;width:124px;height:15px;background:#dcdcdc"></div>
<div style="left:62px;top:357px;font-family:'Liberation Sans';font-size:11px;line-height:11px;color:#000;white-space:pre;letter-spacing:0.004px;">af:document - sample.jsf</div>
<div style="left:49px;top:370px;width:1px;height:1px;background:#8a8a8a"></div>
<div style="left:49px;top:372px;width:1px;height:1px;background:#8a8a8a"></div>
<div style="left:49px;top:374px;width:1px;height:1px;background:#8a8a8a"></div>
<div style="left:49px;top:376px;width:1px;height:1px;background:#8a8a8a"></div>
<div style="left:49px;top:378px;width:1px;height:1px;background:#8a8a8a"></div>
<div style="left:49px;top:380px;width:1px;height:1px;background:#8a8a8a"></div>
<div style="left:49px;top:382px;width:1px;height:1px;background:#8a8a8a"></div>
<div style="left:49px;top:384px;width:1px;height:1px;background:#8a8a8a"></div>
<div style="left:49px;top:386px;width:1px;height:1px;background:#8a8a8a"></div>
<div style="left:49px;top:388px;width:1px;height:1px;background:#8a8a8a"></div>
<div style="left:49px;top:390px;width:1px;height:1px;background:#8a8a8a"></div>
<div style="left:49px;top:392px;width:1px;height:1px;background:#8a8a8a"></div>
<div style="left:49px;top:394px;width:1px;height:1px;background:#8a8a8a"></div>
<div style="left:49px;top:396px;width:1px;height:1px;background:#8a8a8a"></div>
<div style="left:49px;top:398px;width:1px;height:1px;background:#8a8a8a"></div>
<div style="left:49px;top:400px;width:1px;height:1px;background:#8a8a8a"></div>
<div style="left:49px;top:402px;width:1px;height:1px;background:#8a8a8a"></div>
<div style="left:49px;top:404px;width:1px;height:1px;background:#8a8a8a"></div>
<div style="left:49px;top:406px;width:1px;height:1px;background:#8a8a8a"></div>
<div style="left:49px;top:408px;width:1px;height:1px;background:#8a8a8a"></div>
<div style="left:49px;top:410px;width:1px;height:1px;background:#8a8a8a"></div>
<div style="left:49px;top:412px;width:1px;height:1px;background:#8a8a8a"></div>
<div style="left:49px;top:414px;width:1px;height:1px;background:#8a8a8a"></div>
<div style="left:49px;top:416px;width:1px;height:1px;background:#8a8a8a"></div>
<div style="left:49px;top:418px;width:1px;height:1px;background:#8a8a8a"></div>
<div style="left:49px;top:420px;width:1px;height:1px;background:#8a8a8a"></div>
<div style="left:49px;top:422px;width:1px;height:1px;background:#8a8a8a"></div>
<div style="left:49px;top:424px;width:1px;height:1px;background:#8a8a8a"></div>
<div style="left:49px;top:426px;width:1px;height:1px;background:#8a8a8a"></div>
<div style="left:49px;top:428px;width:1px;height:1px;background:#8a8a8a"></div>
<div style="left:49px;top:430px;width:1px;height:1px;background:#8a8a8a"></div>
<div style="left:49px;top:432px;width:1px;height:1px;background:#8a8a8a"></div>
<div style="left:49px;top:434px;width:1px;height:1px;background:#8a8a8a"></div>
<div style="left:49px;top:436px;width:1px;height:1px;background:#8a8a8a"></div>
<div style="left:49px;top:438px;width:1px;height:1px;background:#8a8a8a"></div>
<div style="left:49px;top:440px;width:1px;height:1px;background:#8a8a8a"></div>
<div style="left:49px;top:442px;width:1px;height:1px;background:#8a8a8a"></div>
<div style="left:49px;top:444px;width:1px;height:1px;background:#8a8a8a"></div>
<div style="left:49px;top:446px;width:1px;height:1px;background:#8a8a8a"></div>
<div style="left:49px;top:448px;width:1px;height:1px;background:#8a8a8a"></div>
<div style="left:49px;top:450px;width:1px;height:1px;background:#8a8a8a"></div>
<div style="left:49px;top:452px;width:1px;height:1px;background:#8a8a8a"></div>
<div style="left:49px;top:454px;width:1px;height:1px;background:#8a8a8a"></div>
<div style="left:49px;top:456px;width:1px;height:1px;background:#8a8a8a"></div>
<div style="left:49px;top:458px;width:1px;height:1px;background:#8a8a8a"></div>
<div style="left:49px;top:460px;width:1px;height:1px;background:#8a8a8a"></div>
<div style="left:49px;top:462px;width:1px;height:1px;background:#8a8a8a"></div>
<div style="left:49px;top:464px;width:1px;height:1px;background:#8a8a8a"></div>
<div style="left:50px;top:379px;width:1px;height:1px;background:#8a8a8a"></div>
<div style="left:52px;top:379px;width:1px;height:1px;background:#8a8a8a"></div>
<div style="left:54px;top:379px;width:1px;height:1px;background:#8a8a8a"></div>
<div style="left:56px;top:379px;width:1px;height:1px;background:#8a8a8a"></div>
<div style="left:58px;top:379px;width:1px;height:1px;background:#8a8a8a"></div>
<div style="left:60px;top:379px;width:1px;height:1px;background:#8a8a8a"></div>
<svg style="left:62px;top:372px;" width="15" height="15" viewBox="0 0 15 15"><rect x="0.5" y="0.5" width="8" height="8" fill="#cfe0fa" stroke="#2a62c8"/><rect x="2" y="2" width="3" height="1" fill="#e02020"/><rect x="2" y="4" width="5" height="1" fill="#6a90d0"/><rect x="3.5" y="3.5" width="8" height="8" fill="#cfe0fa" stroke="#2a62c8"/><rect x="5" y="5" width="3" height="1" fill="#e02020"/><rect x="5" y="7" width="5" height="1" fill="#6a90d0"/><rect x="6.5" y="6.5" width="8" height="8" fill="#cfe0fa" stroke="#2a62c8"/><rect x="8" y="8" width="3" height="1" fill="#e02020"/><rect x="8" y="10" width="5" height="1" fill="#6a90d0"/></svg>
<div style="left:81px;top:374px;font-family:'Liberation Sans';font-size:11px;line-height:11px;color:#000;white-space:pre;letter-spacing:-0.128px;">af:messages</div>
<svg style="left:45px;top:392px;" width="9" height="9" viewBox="0 0 9 9"><defs><linearGradient id="eg" x1="0" y1="0" x2="0" y2="1"><stop offset="0" stop-color="#ffffff"/><stop offset="1" stop-color="#d9d4c6"/></linearGradient></defs><rect x="0.5" y="0.5" width="8" height="8" rx="1.5" fill="url(#eg)" stroke="#8c8c8c"/><rect x="2" y="3.8" width="5" height="1.4" fill="#1a1a1a"/></svg>
<div style="left:55px;top:396px;width:1px;height:1px;background:#8a8a8a"></div>
<div style="left:57px;top:396px;width:1px;height:1px;background:#8a8a8a"></div>
<div style="left:59px;top:396px;width:1px;height:1px;background:#8a8a8a"></div>
<div style="left:61px;top:396px;width:1px;height:1px;background:#8a8a8a"></div>
<svg style="left:63px;top:388px;" width="13" height="15" viewBox="0 0 13 15"><rect x="0.5" y="0.5" width="12" height="14" fill="#d6d6f0" stroke="#50508a"/><rect x="2.5" y="4.5" width="3" height="2" fill="#fff" stroke="#6a6aa0"/><rect x="7.5" y="4.5" width="3" height="2" fill="#fff" stroke="#6a6aa0"/><rect x="2.5" y="8.5" width="3" height="2" fill="#fff" stroke="#6a6aa0"/><rect x="7.5" y="8.5" width="3" height="2" fill="#fff" stroke="#6a6aa0"/></svg>
<div style="left:81px;top:391px;font-family:'Liberation Sans';font-size:11px;line-height:11px;color:#000;white-space:pre;letter-spacing:0.250px;">af:form</div>
<div style="left:69px;top:403px;width:1px;height:1px;background:#8a8a8a"></div>
<div style="left:69px;top:405px;width:1px;height:1px;background:#8a8a8a"></div>
<div style="left:69px;top:407px;width:1px;height:1px;background:#8a8a8a"></div>
<svg style="left:65px;top:409px;" width="9" height="9" viewBox="0 0 9 9"><defs><linearGradient id="eg" x1="0" y1="0" x2="0" y2="1"><stop offset="0" stop-color="#ffffff"/><stop offset="1" stop-color="#d9d4c6"/></linearGradient></defs><rect x="0.5" y="0.5" width="8" height="8" rx="1.5" fill="url(#eg)" stroke="#8c8c8c"/><rect x="2" y="3.8" width="5" height="1.4" fill="#1a1a1a"/><rect x="3.8" y="2" width="1.4" height="5" fill="#1a1a1a"/></svg>
<div style="left:75px;top:413px;width:1px;height:1px;background:#8a8a8a"></div>
<div style="left:77px;top:413px;width:1px;height:1px;background:#8a8a8a"></div>
<div style="left:79px;top:413px;width:1px;height:1px;background:#8a8a8a"></div>
<div style="left:81px;top:413px;width:1px;height:1px;background:#8a8a8a"></div>
<svg style="left:82px;top:406px;" width="15" height="14" viewBox="0 0 15 14"><rect x="0.5" y="0.5" width="14" height="13" fill="#dcdcf4" stroke="#50508a"/><line x1="1" y1="3.8" x2="14" y2="3.8" stroke="#7a7ab0"/><line x1="1" y1="7.1" x2="14" y2="7.1" stroke="#7a7ab0"/><line x1="1" y1="10.4" x2="14" y2="10.4" stroke="#7a7ab0"/><line x1="4.0" y1="1" x2="4.0" y2="13" stroke="#7a7ab0"/><line x1="7.5" y1="1" x2="7.5" y2="13" stroke="#7a7ab0"/><line x1="11.0" y1="1" x2="11.0" y2="13" stroke="#7a7ab0"/></svg>
<div style="left:101px;top:408px;font-family:'Liberation Sans';font-size:11px;line-height:11px;color:#000;white-space:pre;letter-spacing:0.147px;">af:table - t1</div>
<svg style="left:45px;top:426px;" width="9" height="9" viewBox="0 0 9 9"><defs><linearGradient id="eg" x1="0" y1="0" x2="0" y2="1"><stop offset="0" stop-color="#ffffff"/><stop offset="1" stop-color="#d9d4c6"/></linearGradient></defs><rect x="0.5" y="0.5" width="8" height="8" rx="1.5" fill="url(#eg)" stroke="#8c8c8c"/><rect x="2" y="3.8" width="5" height="1.4" fill="#1a1a1a"/></svg>
<div style="left:55px;top:430px;width:1px;height:1px;background:#8a8a8a"></div>
<div style="left:57px;top:430px;width:1px;height:1px;background:#8a8a8a"></div>
<div style="left:59px;top:430px;width:1px;height:1px;background:#8a8a8a"></div>
<div style="left:61px;top:430px;width:1px;height:1px;background:#8a8a8a"></div>
<div style="left:62px;top:422px;width:164px;height:18px;border:1px solid #000;background:#fff"></div>
<svg style="left:63px;top:424px;" width="15" height="11" viewBox="0 0 15 11"><defs><linearGradient id="bgi" x1="0" y1="0" x2="0" y2="1"><stop offset="0" stop-color="#f0f0f0"/><stop offset="1" stop-color="#9a9a9a"/></linearGradient></defs><rect x="0.5" y="0.5" width="14" height="10" rx="4" fill="url(#bgi)" stroke="#3a3a3a"/></svg>
<div style="left:82px;top:425px;font-family:'Liberation Sans';font-size:11px;line-height:11px;color:#000;white-space:pre;letter-spacing:0.107px;">af:button - Export table data</div>
<div style="left:69px;top:437px;width:1px;height:1px;background:#8a8a8a"></div>
<div style="left:69px;top:439px;width:1px;height:1px;background:#8a8a8a"></div>
<div style="left:69px;top:441px;width:1px;height:1px;background:#8a8a8a"></div>
<svg style="left:65px;top:443px;" width="9" height="9" viewBox="0 0 9 9"><defs><linearGradient id="eg" x1="0" y1="0" x2="0" y2="1"><stop offset="0" stop-color="#ffffff"/><stop offset="1" stop-color="#d9d4c6"/></linearGradient></defs><rect x="0.5" y="0.5" width="8" height="8" rx="1.5" fill="url(#eg)" stroke="#8c8c8c"/><rect x="2" y="3.8" width="5" height="1.4" fill="#1a1a1a"/><rect x="3.8" y="2" width="1.4" height="5" fill="#1a1a1a"/></svg>
<div style="left:75px;top:447px;width:1px;height:1px;background:#8a8a8a"></div>
<div style="left:77px;top:447px;width:1px;height:1px;background:#8a8a8a"></div>
<div style="left:79px;top:447px;width:1px;height:1px;background:#8a8a8a"></div>
<div style="left:81px;top:447px;width:1px;height:1px;background:#8a8a8a"></div>
<svg style="left:82px;top:441px;" width="15" height="13" viewBox="0 0 15 13"><defs><linearGradient id="fg" x1="0" y1="0" x2="0" y2="1"><stop offset="0" stop-color="#f6f2bc"/><stop offset="1" stop-color="#d6cd84"/></linearGradient></defs><path d="M0.5 2.5 Q0.5 0.5 2.5 0.5 L5.5 0.5 L7 2.5 L13.5 2.5 Q14.5 2.5 14.5 3.5 L14.5 11.5 Q14.5 12.5 13.5 12.5 L1.5 12.5 Q0.5 12.5 0.5 11.5 Z" fill="url(#fg)" stroke="#a39a4a"/><line x1="1" y1="4" x2="14" y2="4" stroke="#fffbe0" stroke-width="1"/></svg>
<div style="left:101px;top:442px;font-family:'Liberation Sans';font-size:11px;line-height:11px;color:#000;white-space:pre;letter-spacing:0.055px;">Button facets</div>
<svg style="left:45px;top:460px;" width="9" height="9" viewBox="0 0 9 9"><defs><linearGradient id="eg" x1="0" y1="0" x2="0" y2="1"><stop offset="0" stop-color="#ffffff"/><stop offset="1" stop-color="#d9d4c6"/></linearGradient></defs><rect x="0.5" y="0.5" width="8" height="8" rx="1.5" fill="url(#eg)" stroke="#8c8c8c"/><rect x="2" y="3.8" width="5" height="1.4" fill="#1a1a1a"/><rect x="3.8" y="2" width="1.4" height="5" fill="#1a1a1a"/></svg>
<div style="left:55px;top:464px;width:1px;height:1px;background:#8a8a8a"></div>
<div style="left:57px;top:464px;width:1px;height:1px;background:#8a8a8a"></div>
<div style="left:59px;top:464px;width:1px;height:1px;background:#8a8a8a"></div>
<div style="left:61px;top:464px;width:1px;height:1px;background:#8a8a8a"></div>
<svg style="left:62px;top:458px;" width="15" height="13" viewBox="0 0 15 13"><defs><linearGradient id="fg" x1="0" y1="0" x2="0" y2="1"><stop offset="0" stop-color="#f6f2bc"/><stop offset="1" stop-color="#d6cd84"/></linearGradient></defs><path d="M0.5 2.5 Q0.5 0.5 2.5 0.5 L5.5 0.5 L7 2.5 L13.5 2.5 Q14.5 2.5 14.5 3.5 L14.5 11.5 Q14.5 12.5 13.5 12.5 L1.5 12.5 Q0.5 12.5 0.5 11.5 Z" fill="url(#fg)" stroke="#a39a4a"/><line x1="1" y1="4" x2="14" y2="4" stroke="#fffbe0" stroke-width="1"/></svg>
<div style="left:81px;top:459px;font-family:'Liberation Sans';font-size:11px;line-height:11px;color:#000;white-space:pre;letter-spacing:-0.106px;">Document facets</div>
<div style="left:390px;top:0px;width:4px;height:524px;background:#9bb5d3"></div>
<div style="left:394px;top:0px;width:581px;height:413px;background:#fff"></div>
<div style="left:394px;top:1px;width:553px;height:16px;background:#eef2f9"></div>
<div style="left:394px;top:0px;width:553px;height:1px;background:repeating-linear-gradient(90deg,#f47a20 0 3px,#f6e6dc 3px 5px)"></div>
<div style="left:394px;top:16px;width:553px;height:1px;background:#d8e0ea"></div>
<div style="left:394px;top:17px;width:553px;height:20px;background:#fff"></div>
<div style="left:394px;top:37px;width:553px;height:1px;background:#e6ebf2"></div>
<div style="left:394px;top:38px;width:553px;height:42px;background:#f7f9fc"></div>
<div style="left:394px;top:58px;width:553px;height:1px;background:#eceff4"></div>
<div style="left:394px;top:80px;width:553px;height:1px;background:#d8e0ea"></div>
<div style="left:394px;top:4px;font-family:'Liberation Sans';font-size:11px;line-height:11px;color:#000;white-space:pre;letter-spacing:0.024px;">mployeeId</div>
<div style="left:490px;top:1px;width:1px;height:79px;background:#e1e6ee"></div>
<div style="left:492px;top:4px;font-family:'Liberation Sans';font-size:11px;line-height:11px;color:#000;white-space:pre;letter-spacing:-0.191px;width:103px;overflow:hidden">FirstName</div>
<div style="left:595px;top:1px;width:1px;height:79px;background:#e1e6ee"></div>
<div style="left:597px;top:4px;font-family:'Liberation Sans';font-size:11px;line-height:11px;color:#000;white-space:pre;letter-spacing:-0.270px;width:103px;overflow:hidden">LastName</div>
<div style="left:700px;top:1px;width:1px;height:79px;background:#e1e6ee"></div>
<div style="left:702px;top:4px;font-family:'Liberation Sans';font-size:11px;line-height:11px;color:#000;white-space:pre;letter-spacing:-0.300px;width:103px;overflow:hidden">Email</div>
<div style="left:805px;top:1px;width:1px;height:79px;background:#e1e6ee"></div>
<div style="left:807px;top:4px;font-family:'Liberation Sans';font-size:11px;line-height:11px;color:#000;white-space:pre;letter-spacing:-0.270px;width:103px;overflow:hidden">PhoneNumber</div>
<div style="left:910px;top:1px;width:1px;height:79px;background:#e1e6ee"></div>
<div style="left:912px;top:4px;font-family:'Liberation Sans';font-size:11px;line-height:11px;color:#000;white-space:pre;letter-spacing:-0.676px;width:35px;overflow:hidden">HireDate</div>
<div style="left:394px;top:18px;width:91px;height:16px;background:#fff;border:1px solid #d9dde3;border-left:none;"></div>
<div style="left:394px;top:18px;width:90px;height:17px;overflow:hidden"><div style="position:absolute;left:-1px;top:4px;font-family:'Liberation Sans';font-size:11px;line-height:11px;color:#000;white-space:pre;letter-spacing:0.1px">#{...EmployeeId.ir</div></div>
<div style="left:493px;top:18px;width:97px;height:16px;background:#fff;border:1px solid #d9dde3;"></div>
<div style="left:494px;top:18px;width:95px;height:17px;overflow:hidden"><div style="position:absolute;left:4px;top:4px;font-family:'Liberation Sans';font-size:11px;line-height:11px;color:#000;white-space:pre;letter-spacing:0.1px">#{...FirstName.inp</div></div>
<div style="left:598px;top:18px;width:97px;height:16px;background:#fff;border:1px solid #d9dde3;"></div>
<div style="left:599px;top:18px;width:95px;height:17px;overflow:hidden"><div style="position:absolute;left:4px;top:4px;font-family:'Liberation Sans';font-size:11px;line-height:11px;color:#000;white-space:pre;letter-spacing:0.1px">#{...LastName.inp</div></div>
<div style="left:703px;top:18px;width:97px;height:16px;background:#fff;border:1px solid #d9dde3;"></div>
<div style="left:704px;top:18px;width:95px;height:17px;overflow:hidden"><div style="position:absolute;left:4px;top:4px;font-family:'Liberation Sans';font-size:11px;line-height:11px;color:#000;white-space:pre;letter-spacing:0.1px">#{...Email.inputVa</div></div>
<div style="left:808px;top:18px;width:97px;height:16px;background:#fff;border:1px solid #d9dde3;"></div>
<div style="left:809px;top:18px;width:95px;height:17px;overflow:hidden"><div style="position:absolute;left:4px;top:4px;font-family:'Liberation Sans';font-size:11px;line-height:11px;color:#000;white-space:pre;letter-spacing:0.1px">#{...PhoneNumber</div></div>
<div style="left:913px;top:18px;width:34px;height:16px;background:#fff;border:1px solid #d9dde3;border-right:none;"></div>
<div style="left:914px;top:18px;width:33px;height:17px;overflow:hidden"><div style="position:absolute;left:4px;top:4px;font-family:'Liberation Sans';font-size:11px;line-height:11px;color:#000;white-space:pre;letter-spacing:0.1px">#{...HireDate.inp</div></div>
<div style="left:394px;top:39px;width:91px;height:16px;background:#f8fafc;border:1px solid #eef0f4;border-left:none;"></div>
<div style="left:394px;top:39px;width:90px;height:17px;overflow:hidden"><div style="position:absolute;left:-1px;top:4px;font-family:'Liberation Sans';font-size:11px;line-height:11px;color:#c8c8c8;white-space:pre;letter-spacing:0.1px">#{...EmployeeId.ir</div></div>
<div style="left:493px;top:39px;width:97px;height:16px;background:#f8fafc;border:1px solid #eef0f4;"></div>
<div style="left:494px;top:39px;width:95px;height:17px;overflow:hidden"><div style="position:absolute;left:4px;top:4px;font-family:'Liberation Sans';font-size:11px;line-height:11px;color:#c8c8c8;white-space:pre;letter-spacing:0.1px">#{...FirstName.inp</div></div>
<div style="left:598px;top:39px;width:97px;height:16px;background:#f8fafc;border:1px solid #eef0f4;"></div>
<div style="left:599px;top:39px;width:95px;height:17px;overflow:hidden"><div style="position:absolute;left:4px;top:4px;font-family:'Liberation Sans';font-size:11px;line-height:11px;color:#c8c8c8;white-space:pre;letter-spacing:0.1px">#{...LastName.inp</div></div>
<div style="left:703px;top:39px;width:97px;height:16px;background:#f8fafc;border:1px solid #eef0f4;"></div>
<div style="left:704px;top:39px;width:95px;height:17px;overflow:hidden"><div style="position:absolute;left:4px;top:4px;font-family:'Liberation Sans';font-size:11px;line-height:11px;color:#c8c8c8;white-space:pre;letter-spacing:0.1px">#{...Email.inputVa</div></div>
<div style="left:808px;top:39px;width:97px;height:16px;background:#f8fafc;border:1px solid #eef0f4;"></div>
<div style="left:809px;top:39px;width:95px;height:17px;overflow:hidden"><div style="position:absolute;left:4px;top:4px;font-family:'Liberation Sans';font-size:11px;line-height:11px;color:#c8c8c8;white-space:pre;letter-spacing:0.1px">#{...PhoneNumber</div></div>
<div style="left:913px;top:39px;width:34px;height:16px;background:#f8fafc;border:1px solid #eef0f4;border-right:none;"></div>
<div style="left:914px;top:39px;width:33px;height:17px;overflow:hidden"><div style="position:absolute;left:4px;top:4px;font-family:'Liberation Sans';font-size:11px;line-height:11px;color:#c8c8c8;white-space:pre;letter-spacing:0.1px">#{...HireDate.inp</div></div>
<div style="left:394px;top:60px;width:91px;height:16px;background:#f8fafc;border:1px solid #eef0f4;border-left:none;"></div>
<div style="left:394px;top:60px;width:90px;height:17px;overflow:hidden"><div style="position:absolute;left:-1px;top:4px;font-family:'Liberation Sans';font-size:11px;line-height:11px;color:#c8c8c8;white-space:pre;letter-spacing:0.1px">#{...EmployeeId.ir</div></div>
<div style="left:493px;top:60px;width:97px;height:16px;background:#f8fafc;border:1px solid #eef0f4;"></div>
<div style="left:494px;top:60px;width:95px;height:17px;overflow:hidden"><div style="position:absolute;left:4px;top:4px;font-family:'Liberation Sans';font-size:11px;line-height:11px;color:#c8c8c8;white-space:pre;letter-spacing:0.1px">#{...FirstName.inp</div></div>
<div style="left:598px;top:60px;width:97px;height:16px;background:#f8fafc;border:1px solid #eef0f4;"></div>
<div style="left:599px;top:60px;width:95px;height:17px;overflow:hidden"><div style="position:absolute;left:4px;top:4px;font-family:'Liberation Sans';font-size:11px;line-height:11px;color:#c8c8c8;white-space:pre;letter-spacing:0.1px">#{...LastName.inp</div></div>
<div style="left:703px;top:60px;width:97px;height:16px;background:#f8fafc;border:1px solid #eef0f4;"></div>
<div style="left:704px;top:60px;width:95px;height:17px;overflow:hidden"><div style="position:absolute;left:4px;top:4px;font-family:'Liberation Sans';font-size:11px;line-height:11px;color:#c8c8c8;white-space:pre;letter-spacing:0.1px">#{...Email.inputVa</div></div>
<div style="left:808px;top:60px;width:97px;height:16px;background:#f8fafc;border:1px solid #eef0f4;"></div>
<div style="left:809px;top:60px;width:95px;height:17px;overflow:hidden"><div style="position:absolute;left:4px;top:4px;font-family:'Liberation Sans';font-size:11px;line-height:11px;color:#c8c8c8;white-space:pre;letter-spacing:0.1px">#{...PhoneNumber</div></div>
<div style="left:913px;top:60px;width:34px;height:16px;background:#f8fafc;border:1px solid #eef0f4;border-right:none;"></div>
<div style="left:914px;top:60px;width:33px;height:17px;overflow:hidden"><div style="position:absolute;left:4px;top:4px;font-family:'Liberation Sans';font-size:11px;line-height:11px;color:#c8c8c8;white-space:pre;letter-spacing:0.1px">#{...HireDate.inp</div></div>
<div style="left:394px;top:82px;width:95px;height:21px;background:linear-gradient(#cfe2f8,#b4d0f0);border-bottom:2px solid #f0b848"></div>
<div style="left:394px;top:86px;font-family:'Liberation Sans';font-size:11px;line-height:11px;color:#3a3a3a;white-space:pre;letter-spacing:0.044px;">Export table data</div>
<div style="left:489px;top:83px;width:2px;height:20px;background:#111"></div>
<div style="left:395px;top:61px;width:145px;height:22px;border:1px solid #f08c18;border-left-width:2px;border-bottom-width:2px;border-radius:4px 4px 1px 1px;background:linear-gradient(#fde6c8 0%,#f9dcb4 40%,#fbe070 85%,#f8c040 100%);box-shadow:inset 0 -2px 2px rgba(255,160,0,0.35)"></div>
<div style="left:400px;top:66px;font-family:'Liberation Sans';font-size:11.5px;line-height:11.5px;color:#000;white-space:pre;letter-spacing:0.142px;">Button - Export table data</div>
<div style="left:947px;top:0px;width:14px;height:395px;background:linear-gradient(90deg,#f7f7f7,#fbfbfb 50%,#ededed)"></div>
<div style="left:947px;top:0px;width:1px;height:395px;background:#e8e8e8"></div>
<svg style="left:949px;top:0px;" width="12" height="135" viewBox="0 0 12 135"><defs><linearGradient id="vsb" x1="0" y1="0" x2="1" y2="0"><stop offset="0" stop-color="#b6c9e4"/><stop offset="0.35" stop-color="#c9daee"/><stop offset="0.5" stop-color="#d2e0f2"/><stop offset="0.7" stop-color="#c6d8ee"/><stop offset="1" stop-color="#b2c6e2"/></linearGradient></defs><rect x="0.5" y="-6" width="11" height="140" rx="5.5" fill="url(#vsb)" stroke="#a2b6d2"/></svg>
<svg style="left:950px;top:383px;" width="9" height="5" viewBox="0 0 9 5"><path d="M0 0 L4.5 5 L9 0 Z" fill="#a8a8a8"/></svg>
<svg style="left:394px;top:380px;" width="182" height="15" viewBox="0 0 182 15"><defs><linearGradient id="bcg" x1="0" y1="0" x2="0" y2="1"><stop offset="0" stop-color="#f6f8fb"/><stop offset="1" stop-color="#e6eaf0"/></linearGradient></defs><path d="M1.5 0.5 L55 0.5 L61 7.5 L55 14.5 L1.5 14.5 Z" fill="url(#bcg)" stroke="#b6c2d2"/><path d="M55 0.5 L174 0.5 L180 7.5 L174 14.5 L55 14.5 L61 7.5 Z" fill="url(#bcg)" stroke="#b6c2d2"/><path d="M41 6 L48 6 L44.5 9.5 Z" fill="#6a88b0"/><path d="M162 6 L169 6 L165.5 9.5 Z" fill="#6a88b0"/></svg>
<div style="left:400px;top:382px;font-family:'Liberation Sans';font-size:11px;line-height:11px;color:#222;white-space:pre;letter-spacing:0.312px;">f:view</div>
<div style="left:458px;top:382px;font-family:'Liberation Sans';font-size:11px;line-height:11px;color:#111;white-space:pre;font-weight:bold;letter-spacing:0.502px;">af:document#d1</div>
<div style="left:394px;top:395px;width:553px;height:18px;background:#fff"></div>
<div style="left:394px;top:395px;width:40px;height:17px;background:#fff;border-left:1px solid #b0b0b0;border-right:1px solid #c8c8c8;border-bottom:1px solid #a0a0a0;border-radius:0 0 2px 2px"></div>
<div style="left:398px;top:399px;font-family:'Liberation Sans';font-size:11px;line-height:11px;color:#000;white-space:pre;letter-spacing:-0.375px;">Design</div>
<div style="left:435px;top:395px;width:41px;height:17px;background:linear-gradient(#fafafa,#e4e4e4);border:1px solid #d0d0d0;border-top:none"></div>
<div style="left:439px;top:399px;font-family:'Liberation Sans';font-size:11px;line-height:11px;color:#222;white-space:pre;letter-spacing:-0.479px;">Source</div>
<div style="left:477px;top:395px;width:42px;height:17px;background:linear-gradient(#fafafa,#e4e4e4);border:1px solid #d0d0d0;border-top:none"></div>
<div style="left:481px;top:399px;font-family:'Liberation Sans';font-size:11px;line-height:11px;color:#222;white-space:pre;letter-spacing:-0.174px;">History</div>
<div style="left:520px;top:395px;width:47px;height:17px;background:linear-gradient(#fafafa,#e4e4e4);border:1px solid #d0d0d0;border-top:none"></div>
<div style="left:524px;top:399px;font-family:'Liberation Sans';font-size:11px;line-height:11px;color:#222;white-space:pre;letter-spacing:-0.402px;">Bindings</div>
<div style="left:567px;top:395px;width:380px;height:16px;background:linear-gradient(#f6f6f6,#eaeaea 50%,#f6f6f6)"></div>
<div style="left:567px;top:395px;width:380px;height:1px;background:#e4e4e4"></div>
<svg style="left:572px;top:399px;" width="5" height="9" viewBox="0 0 5 9"><path d="M5 0 L0 4.5 L5 9 Z" fill="#a8a8a8"/></svg>
<svg style="left:933px;top:399px;" width="5" height="9" viewBox="0 0 5 9"><path d="M0 0 L5 4.5 L0 9 Z" fill="#a8a8a8"/></svg>
<svg style="left:584px;top:396px;" width="150" height="15" viewBox="0 0 150 15"><defs><linearGradient id="hsb" x1="0" y1="0" x2="0" y2="1"><stop offset="0" stop-color="#b6c9e4"/><stop offset="0.35" stop-color="#c9daee"/><stop offset="0.5" stop-color="#d2e0f2"/><stop offset="0.7" stop-color="#c6d8ee"/><stop offset="1" stop-color="#b2c6e2"/></linearGradient></defs><rect x="0.5" y="0.5" width="149" height="13" rx="6.5" fill="url(#hsb)" stroke="#a2b6d2"/></svg>
<div style="left:942px;top:397px;width:5px;height:14px;border:1px solid #3a66a8;background:#eef4fb"></div>
<div style="left:394px;top:413px;width:581px;height:4px;background:#9bb5d3"></div>
<div style="left:394px;top:417px;width:581px;height:107px;background:#fff;border-top-left-radius:3px;border-top-right-radius:3px"></div>
<div style="left:394px;top:427px;width:581px;height:11px;background:#ebebeb"></div>
<div style="left:402px;top:423px;font-family:'Liberation Sans';font-size:11px;line-height:11px;color:#000;white-space:pre;letter-spacing:-0.094px;">Messages - Log</div>
<svg style="left:935px;top:425px;" width="6" height="6" viewBox="0 0 6 6"><path d="M0.5 0.5 L5.5 5.5 M5.5 0.5 L0.5 5.5" stroke="#a8a8a8" stroke-width="1"/></svg>
<div style="left:945px;top:420px;width:1px;height:15px;background:#c8c8c8"></div>
<svg style="left:957px;top:423px;" width="10" height="9" viewBox="0 0 10 9"><rect x="0.5" y="0.5" width="9" height="8" fill="#f8f8f8" stroke="#8a8a8a"/><rect x="2" y="5" width="6" height="2" fill="#7a7a7a"/></svg>
<div style="left:394px;top:438px;width:566px;height:86px;overflow:hidden">
<div style="position:absolute;left:3px;top:-5px;font-family:'Liberation Mono';font-size:12px;line-height:12px;color:#000;white-space:pre;letter-spacing:-0.2px">Business Components: Saving file: /C:/JDeveloper/mywork/Sample/Model/src/model/co</div>
<div style="position:absolute;left:3px;top:11px;font-family:'Liberation Mono';font-size:12px;line-height:12px;color:#000;white-space:pre;letter-spacing:-0.2px">MDS annotation properties not available for Export table data because the identifier is not set.</div>
<div style="position:absolute;left:3px;top:27px;font-family:'Liberation Mono';font-size:12px;line-height:12px;color:#000;white-space:pre;letter-spacing:-0.2px">oracle.xml.parser.v2.XMLDOMException: invalid character   in name</div>
<div style="position:absolute;left:3px;top:43px;font-family:'Liberation Mono';font-size:12px;line-height:12px;color:#000;white-space:pre;letter-spacing:-0.2px">MDS annotation properties not available for Export table data because the identifier is not set.</div>
<div style="position:absolute;left:3px;top:59px;font-family:'Liberation Mono';font-size:12px;line-height:12px;color:#000;white-space:pre;letter-spacing:-0.2px">oracle.xml.parser.v2.XMLDOMException: invalid character   in name</div>
<div style="position:absolute;left:3px;top:75px;font-family:'Liberation Mono';font-size:12px;line-height:12px;color:#000;white-space:pre;letter-spacing:-0.2px">MDS annotation properties not available for Export table data because the identifier is not set.</div>
</div>
<div style="left:960px;top:438px;width:15px;height:86px;background:linear-gradient(90deg,#f4f4f4,#ececec 50%,#f4f4f4)"></div>
<div style="left:960px;top:438px;width:1px;height:86px;background:#e2e2e2"></div>
<svg style="left:963px;top:442px;" width="9" height="5" viewBox="0 0 9 5"><path d="M0 5 L4.5 0 L9 5 Z" fill="#a8a8a8"/></svg>
<svg style="left:962px;top:505px;" width="13" height="25" viewBox="0 0 13 25"><defs><linearGradient id="lsb" x1="0" y1="0" x2="1" y2="0"><stop offset="0" stop-color="#b6c9e4"/><stop offset="0.35" stop-color="#c9daee"/><stop offset="0.5" stop-color="#d2e0f2"/><stop offset="0.7" stop-color="#c6d8ee"/><stop offset="1" stop-color="#b2c6e2"/></linearGradient></defs><rect x="0.5" y="0.5" width="11" height="30" rx="5.5" fill="url(#lsb)" stroke="#a2b6d2"/></svg>
<div style="left:975px;top:0px;width:4px;height:524px;background:#9bb5d3"></div>
<div style="left:478px;top:155px;width:407px;height:156px;border-radius:6px;box-shadow:0 2px 10px rgba(0,0,0,0.35)"></div>
<div style="left:478px;top:155px;width:407px;height:156px;border-radius:6px;border:1px solid #5a5a5a;background:linear-gradient(135deg,#ffffff 0%,#f4f4f4 40%,#ffffff 70%,#f2f2f2 100%)"></div>
<div style="left:486px;top:164px;font-family:'Liberation Sans';font-size:12px;line-height:12px;color:#000;white-space:pre;letter-spacing:0.023px;">Insert Export Collection Action Listener</div>
<div style="left:831px;top:156px;width:47px;height:19px;border:1px solid #9a9a9a;border-top:none;border-radius:0 0 4px 4px;background:#fff"></div>
<svg style="left:849px;top:159px;" width="13" height="12" viewBox="0 0 13 12"><path d="M3 2.8 L10 9.2 M10 2.8 L3 9.2" stroke="#3a3e5a" stroke-width="4.4" stroke-linecap="square"/><path d="M3 2.8 L10 9.2 M10 2.8 L3 9.2" stroke="#ececf0" stroke-width="2.2" stroke-linecap="square"/></svg>
<div style="left:485px;top:184px;width:393px;height:120px;border:1px solid #8a8a8a;border-right-color:#aaa;border-bottom-color:#777;background:#ececec"></div>
<div style="left:516px;top:209px;font-family:'Liberation Sans';font-size:12px;line-height:12px;color:#000;white-space:pre;letter-spacing:-0.180px;">ExportedId *:</div>
<div style="left:590px;top:204px;width:248px;height:20px;border:1px solid #8a8a8a;background:#fff"></div>
<svg style="left:505px;top:235px;" width="5" height="5" viewBox="0 0 5 5"><circle cx="2.5" cy="2.5" r="1.8" fill="#fff" stroke="#3a9a3a" stroke-width="1.2"/></svg>
<div style="left:517px;top:232px;font-family:'Liberation Sans';font-size:12px;line-height:12px;color:#000;white-space:pre;letter-spacing:-0.049px;">Type *:</div>
<div style="left:590px;top:228px;width:248px;height:20px;border:1px solid #8a8a8a;background:#fff"></div>
<div style="left:591px;top:233px;font-family:'Liberation Sans';font-size:12px;line-height:12px;color:#000;white-space:pre;letter-spacing:-0.965px;">excelHTML</div>
<div style="left:824px;top:228px;width:14px;height:20px;border:1px solid #8a8a8a;border-radius:0 2px 2px 0;background:linear-gradient(#fdfdfd,#dedede)"></div>
<svg style="left:827px;top:236px;" width="8" height="5" viewBox="0 0 8 5"><path d="M0 0 L8 0 L4 5 Z" fill="#000"/></svg>
<div style="left:496px;top:275px;width:84px;height:20px;border:1px solid #a8a8a8;border-radius:3px;background:linear-gradient(#f6f6f6 0%,#ececec 45%,#dddddd 55%,#d6d6d6 100%)"></div>
<div style="left:527.0px;top:279px;font-family:'Liberation Sans';font-size:12px;line-height:12px;color:#000;white-space:pre;letter-spacing:-0.672px;">Help</div>
<div style="left:691px;top:275px;width:84px;height:20px;border:1px solid #7fa6cf;border-radius:3px;background:linear-gradient(#f6f6f6 0%,#ececec 45%,#dddddd 55%,#d6d6d6 100%)"></div>
<div style="left:725.5px;top:279px;font-family:'Liberation Sans';font-size:12px;line-height:12px;color:#000;white-space:pre;letter-spacing:-1.164px;">OK</div>
<div style="left:783px;top:275px;width:84px;height:20px;border:1px solid #a8a8a8;border-radius:3px;background:linear-gradient(#f6f6f6 0%,#ececec 45%,#dddddd 55%,#d6d6d6 100%)"></div>
<div style="left:808.5px;top:279px;font-family:'Liberation Sans';font-size:12px;line-height:12px;color:#000;white-space:pre;letter-spacing:-0.727px;">Cancel</div>
<div style="left:527px;top:290px;width:8px;height:1px;background:#000"></div>
<div style="left:979px;top:0px;width:377px;height:524px;background:#f5f5f5"></div>
<div style="left:983px;top:-3px;width:373px;height:25px;border:1px solid #c4c4c4;border-radius:4px;background:linear-gradient(#fafafa 0%,#f6f6f6 40%,#d8d8d8 46%,#e2e2e2 70%,#ececec 100%)"></div>
<div style="left:989px;top:6px;font-family:'Liberation Sans';font-size:11px;line-height:11px;color:#000;white-space:pre;letter-spacing:-0.559px;">ADF Faces</div>
<svg style="left:1340px;top:8px;" width="9" height="4" viewBox="0 0 9 4"><path d="M0 0 L9 0 L4.5 4 Z" fill="#4a6aa8"/></svg>
<div style="left:979px;top:22px;width:377px;height:2px;background:#fafafa"></div>
<div style="left:979px;top:24px;width:377px;height:1px;background:#d6d6d6"></div>
<div style="left:979px;top:25px;width:377px;height:17px;background:linear-gradient(#fdfdfd 0 1px,#f1f1f1 1px,#e9e9e9)"></div>
<div style="left:979px;top:42px;width:377px;height:1px;background:#cdd6e2"></div>
<svg style="left:984px;top:30px;" width="10" height="10" viewBox="0 0 10 10"><rect x="0" y="0" width="10" height="10" fill="#f4f6fa"/><path d="M9.5 0 L9.5 9.5 L0 9.5" fill="none" stroke="#7a8494"/><rect x="2" y="4" width="6" height="1" fill="#2a5a8a"/></svg>
<div style="left:996px;top:29px;font-family:'Liberation Sans';font-size:11px;line-height:11px;color:#000;white-space:pre;letter-spacing:-0.259px;">Search Results</div>
<svg style="left:988px;top:51px;" width="18" height="18" viewBox="0 0 18 18"><path d="M1.5 16.5 L6 11.5 L8.5 13 L7 16.5 Z" fill="#b8c6f4" stroke="#4a5ec8" stroke-width="0.9"/><ellipse cx="8.5" cy="8" rx="7.2" ry="4.2" transform="rotate(45 8.5 8)" fill="#eef2ff" stroke="#4a5ec8" stroke-width="1"/><ellipse cx="7.5" cy="7" rx="4" ry="2" transform="rotate(45 7.5 7)" fill="#c8d4fa"/><path d="M6.5 10 L15 2" stroke="#3040a8" stroke-width="1" stroke-dasharray="1.2 1"/><circle cx="11.5" cy="5.2" r="1.1" fill="#3040a8"/></svg>
<div style="left:1008px;top:55px;font-family:'Liberation Sans';font-size:11px;line-height:11px;color:#5a5e6e;white-space:pre;letter-spacing:-0.121px;">Export Collection Action Listener (ADF Faces.Operations)</div>
<svg style="left:989px;top:79px;" width="16" height="12" viewBox="0 0 16 12"><path d="M5.5 1.6 L1.7 5.4 L5.5 9.2" fill="none" stroke="#c8501a" stroke-width="3" stroke-linecap="round" stroke-linejoin="round"/><path d="M9.5 1.6 L13.3 5.4 L9.5 9.2" fill="none" stroke="#c8501a" stroke-width="3" stroke-linecap="round" stroke-linejoin="round"/><path d="M5.5 1.6 L1.7 5.4 L5.5 9.2" fill="none" stroke="#ffb24a" stroke-width="1.3" stroke-linecap="round" stroke-linejoin="round"/><path d="M9.5 1.6 L13.3 5.4 L9.5 9.2" fill="none" stroke="#ffa040" stroke-width="1.3" stroke-linecap="round" stroke-linejoin="round"/></svg>
<div style="left:1008px;top:80px;font-family:'Liberation Sans';font-size:11px;line-height:11px;color:#5a5e6e;white-space:pre;letter-spacing:-0.081px;">Export Pivot Table Data (ADF Data Visualizations.Type-Specific Child Tag</div>
<div style="left:979px;top:248px;width:377px;height:1px;background:#fdfdfd"></div>
<div style="left:979px;top:249px;width:377px;height:16px;background:linear-gradient(#fdfdfd 0 1px,#f1f1f1 1px,#e9e9e9)"></div>
<div style="left:979px;top:265px;width:377px;height:1px;background:#cdd6e2"></div>
<svg style="left:984px;top:254px;" width="10" height="10" viewBox="0 0 10 10"><rect x="0" y="0" width="10" height="10" fill="#f4f6fa"/><path d="M9.5 0 L9.5 9.5 L0 9.5" fill="none" stroke="#7a8494"/><rect x="2" y="4" width="6" height="1" fill="#2a5a8a"/></svg>
<div style="left:996px;top:252px;font-family:'Liberation Sans';font-size:11px;line-height:11px;color:#000;white-space:pre;letter-spacing:-0.137px;">General Controls</div>
<div style="left:1347px;top:266px;width:9px;height:175px;background:linear-gradient(90deg,#f8f8f8,#ececec)"></div>
<div style="left:1347px;top:266px;width:1px;height:175px;background:#e0e0e0"></div>
<svg style="left:1349px;top:269px;" width="7" height="5" viewBox="0 0 7 5"><path d="M0 5 L3.5 0 L7 5 Z" fill="#a8a8a8"/></svg>
<svg style="left:1349px;top:431px;" width="7" height="5" viewBox="0 0 7 5"><path d="M0 0 L3.5 5 L7 0 Z" fill="#a8a8a8"/></svg>
<svg style="left:1349px;top:280px;" width="8" height="83" viewBox="0 0 8 83"><defs><linearGradient id="psb" x1="0" y1="0" x2="1" y2="0"><stop offset="0" stop-color="#b6c9e4"/><stop offset="0.35" stop-color="#c9daee"/><stop offset="0.5" stop-color="#d2e0f2"/><stop offset="0.7" stop-color="#c6d8ee"/><stop offset="1" stop-color="#b2c6e2"/></linearGradient></defs><rect x="0.5" y="0.5" width="12" height="82" rx="5.5" fill="url(#psb)" stroke="#a2b6d2"/></svg>
<svg style="left:1006px;top:281px;" width="31" height="20" viewBox="0 0 31 20"><defs><linearGradient id="btn" x1="0" y1="0" x2="0" y2="1"><stop offset="0" stop-color="#eef2f8"/><stop offset="1" stop-color="#c8d4e4"/></linearGradient></defs><rect x="0.5" y="0.5" width="29" height="18" fill="url(#btn)" stroke="#a0a8b4"/><path d="M30 1.5 L30 19.5 L1.5 19.5" fill="none" stroke="#9a9a9a"/></svg>
<div style="left:1005px;top:313px;font-family:'Liberation Sans';font-size:11px;line-height:11px;color:#5e6270;white-space:pre;letter-spacing:0.026px;">Button</div>
<svg style="left:1096px;top:281px;" width="31" height="20" viewBox="0 0 31 20"><rect x="0.5" y="0.5" width="29" height="18" fill="#f6f6f6" stroke="#909090"/><path d="M30 1.5 L30 19.5 L1.5 19.5" fill="none" stroke="#9a9a9a"/><rect x="1" y="1" width="5" height="5" fill="#f07010"/></svg>
<div style="left:1080px;top:313px;font-family:'Liberation Sans';font-size:11px;line-height:11px;color:#5e6270;white-space:pre;letter-spacing:0.135px;">Context Info</div>
<svg style="left:1184px;top:276px;" width="31" height="29" viewBox="0 0 31 29"><rect x="2" y="0.5" width="12" height="12" rx="1" fill="#d82020" stroke="#8a1010"/><path d="M5 3.5 L11 9.5 M11 3.5 L5 9.5" stroke="#fff" stroke-width="2"/><circle cx="23.5" cy="15" r="7" fill="#8cc4f4" stroke="#2a60b0"/><rect x="22.5" y="13" width="2.2" height="6" fill="#1a3a90"/><rect x="22.5" y="10" width="2.2" height="2" fill="#1a3a90"/><path d="M8 14.5 L15.5 28 L0.5 28 Z" fill="#f8c820" stroke="#a07010"/><rect x="7" y="18" width="2" height="5" fill="#222"/><rect x="7" y="24" width="2" height="2" fill="#222"/></svg>
<div style="left:1190px;top:313px;font-family:'Liberation Sans';font-size:11px;line-height:11px;color:#5e6270;white-space:pre;letter-spacing:-0.203px;">Icon</div>
<svg style="left:1275px;top:278px;" width="31" height="27" viewBox="0 0 31 27"><rect x="0.5" y="0.5" width="29" height="25" fill="#fff" stroke="#a0a0a0"/><path d="M30 1.5 L30 26.5 L1.5 26.5" fill="none" stroke="#9a9a9a"/><rect x="3" y="3" width="25" height="20" fill="#3a8ae0"/><circle cx="9" cy="8" r="3" fill="#ffe060"/><path d="M3 23 L3 18 C8 14 12 16 15 19 L21 11 L28 18 L28 23 Z" fill="#30a040"/></svg>
<div style="left:1275px;top:313px;font-family:'Liberation Sans';font-size:11px;line-height:11px;color:#5e6270;white-space:pre;letter-spacing:-0.119px;">Image</div>
<svg style="left:1006px;top:336px;" width="31" height="27" viewBox="0 0 31 27"><defs><linearGradient id="ia" x1="0" y1="0" x2="0" y2="1"><stop offset="0" stop-color="#1f68d0"/><stop offset="0.48" stop-color="#98c8f2"/><stop offset="0.55" stop-color="#60c060"/><stop offset="1" stop-color="#0f7a2a"/></linearGradient></defs><rect x="1.5" y="1.5" width="29" height="25" fill="#8a8a8a" opacity="0.6"/><rect x="0.5" y="0.5" width="29" height="25" fill="#fdf6f0" stroke="#b8b8b8"/><rect x="3" y="3" width="24" height="20" fill="url(#ia)"/><g transform="translate(7.5,6) scale(1.05)"><path d="M0.8 0.8 L6.8 0.8 L6.8 3.8 L5.2 3.8 C3.6 5.6 3.6 8.2 6 10.6 L4.2 12.6 C0.6 9.4 0.6 5.6 2.6 3.8 L0.8 3.8 Z" fill="#fff" stroke="#2a6ad0" stroke-width="0.8" stroke-linejoin="round"/><path d="M12.2 12.2 L6.2 12.2 L6.2 9.2 L7.8 9.2 C9.4 7.4 9.4 4.8 7 2.4 L8.8 0.6 C12.4 3.6 12.4 7.4 10.4 9.2 L12.2 9.2 Z" fill="#fff" stroke="#2a6ad0" stroke-width="0.8" stroke-linejoin="round"/></g></svg>
<div style="left:1004px;top:371px;font-family:'Liberation Sans';font-size:11px;line-height:11px;color:#5e6270;white-space:pre;letter-spacing:-0.119px;">Image</div>
<div style="left:1002px;top:385px;font-family:'Liberation Sans';font-size:11px;line-height:11px;color:#5e6270;white-space:pre;letter-spacing:-0.035px;">(Active)</div>
<svg style="left:1096px;top:341px;" width="32" height="17" viewBox="0 0 32 17"><defs><linearGradient id="lk" x1="0" y1="0" x2="0" y2="1"><stop offset="0" stop-color="#f4f8fc"/><stop offset="0.6" stop-color="#d4deea"/><stop offset="1" stop-color="#a8b4c4"/></linearGradient></defs><path fill-rule="evenodd" d="M19.0 0.5 L23.0 0.5 A7.5 7.5 0 0 1 23.0 15.5 L19.0 15.5 A7.5 7.5 0 0 1 19.0 0.5 Z M22.0 4.5 L23.0 4.5 A3.5 3.5 0 0 1 23.0 11.5 L22.0 11.5 A3.5 3.5 0 0 1 22.0 4.5 Z" fill="url(#lk)" stroke="#4a5666" stroke-width="1"/><path fill-rule="evenodd" d="M8.0 0.5 L12.0 0.5 A7.5 7.5 0 0 1 12.0 15.5 L8.0 15.5 A7.5 7.5 0 0 1 8.0 0.5 Z M8.0 4.5 L9.0 4.5 A3.5 3.5 0 0 1 9.0 11.5 L8.0 11.5 A3.5 3.5 0 0 1 8.0 4.5 Z" fill="url(#lk)" stroke="#4a5666" stroke-width="1"/></svg>
<div style="left:1102px;top:371px;font-family:'Liberation Sans';font-size:11px;line-height:11px;color:#5e6270;white-space:pre;letter-spacing:-0.297px;">Link</div>
<svg style="left:1188px;top:336px;" width="25" height="25" viewBox="0 0 25 25"><rect x="0" y="0" width="20" height="18" fill="#404040"/><rect x="4" y="2" width="12" height="6" fill="#80b8f0"/><rect x="4" y="10" width="12" height="6" fill="#80b8f0"/><rect x="1" y="2" width="2" height="2" fill="#fff"/><rect x="1" y="7" width="2" height="2" fill="#fff"/><rect x="1" y="12" width="2" height="2" fill="#fff"/><rect x="17" y="2" width="2" height="2" fill="#fff"/><path d="M12 10 L17 10 L24 4 L24 24 L17 18 L12 18 Z" fill="#e8c840" stroke="#8a6a10" stroke-width="0.8"/></svg>
<div style="left:1186px;top:371px;font-family:'Liberation Sans';font-size:11px;line-height:11px;color:#5e6270;white-space:pre;letter-spacing:-0.394px;">Media</div>
<svg style="left:1275px;top:343px;" width="32" height="12" viewBox="0 0 32 12"><rect x="0.5" y="0.5" width="30" height="10" fill="#e8e8e8" stroke="#a0a0a0"/><rect x="1" y="1" width="19" height="9" fill="#3a8ae0"/><rect x="1" y="1" width="19" height="3" fill="#90c4f4"/><path d="M31 1.5 L31 11.5 L1.5 11.5" fill="none" stroke="#9a9a9a"/></svg>
<div style="left:1268px;top:371px;font-family:'Liberation Sans';font-size:11px;line-height:11px;color:#5e6270;white-space:pre;letter-spacing:-0.254px;">Progress</div>
<div style="left:1269px;top:385px;font-family:'Liberation Sans';font-size:11px;line-height:11px;color:#5e6270;white-space:pre;letter-spacing:-0.024px;">Indicator</div>
<svg style="left:1007px;top:412px;" width="29" height="19" viewBox="0 0 29 19"><defs><linearGradient id="pl" x1="0" y1="0" x2="0" y2="1"><stop offset="0" stop-color="#5aa0f0"/><stop offset="1" stop-color="#1050b0"/></linearGradient></defs><rect x="1.8" y="1.8" width="24.5" height="14.5" rx="7.2" fill="#fff" stroke="url(#pl)" stroke-width="3.4"/></svg>
<div style="left:979px;top:440px;width:377px;height:1px;background:#fdfdfd"></div>
<div style="left:979px;top:441px;width:377px;height:17px;background:linear-gradient(#fdfdfd 0 1px,#f1f1f1 1px,#e9e9e9)"></div>
<div style="left:979px;top:458px;width:377px;height:1px;background:#cdd6e2"></div>
<svg style="left:984px;top:446px;" width="10" height="10" viewBox="0 0 10 10"><rect x="0" y="0" width="10" height="10" fill="#f4f6fa"/><path d="M9.5 0 L9.5 9.5 L0 9.5" fill="none" stroke="#7a8494"/><rect x="2" y="4" width="6" height="1" fill="#2a5a8a"/><rect x="4.5" y="1.5" width="1" height="6" fill="#2a5a8a"/></svg>
<div style="left:996px;top:445px;font-family:'Liberation Sans';font-size:11px;line-height:11px;color:#000;white-space:pre;letter-spacing:-0.054px;">Text and Selection</div>
<div style="left:979px;top:459px;width:377px;height:17px;background:linear-gradient(#fdfdfd 0 1px,#f1f1f1 1px,#e9e9e9)"></div>
<div style="left:979px;top:476px;width:377px;height:1px;background:#cdd6e2"></div>
<svg style="left:984px;top:464px;" width="10" height="10" viewBox="0 0 10 10"><rect x="0" y="0" width="10" height="10" fill="#f4f6fa"/><path d="M9.5 0 L9.5 9.5 L0 9.5" fill="none" stroke="#7a8494"/><rect x="2" y="4" width="6" height="1" fill="#2a5a8a"/><rect x="4.5" y="1.5" width="1" height="6" fill="#2a5a8a"/></svg>
<div style="left:996px;top:463px;font-family:'Liberation Sans';font-size:11px;line-height:11px;color:#000;white-space:pre;letter-spacing:-0.345px;">Data Views</div>
<div style="left:979px;top:477px;width:377px;height:17px;background:linear-gradient(#fdfdfd 0 1px,#f1f1f1 1px,#e9e9e9)"></div>
<div style="left:979px;top:494px;width:377px;height:1px;background:#cdd6e2"></div>
<svg style="left:984px;top:482px;" width="10" height="10" viewBox="0 0 10 10"><rect x="0" y="0" width="10" height="10" fill="#f4f6fa"/><path d="M9.5 0 L9.5 9.5 L0 9.5" fill="none" stroke="#7a8494"/><rect x="2" y="4" width="6" height="1" fill="#2a5a8a"/><rect x="4.5" y="1.5" width="1" height="6" fill="#2a5a8a"/></svg>
<div style="left:996px;top:481px;font-family:'Liberation Sans';font-size:11px;line-height:11px;color:#000;white-space:pre;letter-spacing:-0.273px;">Menus and Toolbars</div>
<div style="left:979px;top:495px;width:377px;height:17px;background:linear-gradient(#fdfdfd 0 1px,#f1f1f1 1px,#e9e9e9)"></div>
<div style="left:979px;top:512px;width:377px;height:1px;background:#cdd6e2"></div>
<svg style="left:984px;top:500px;" width="10" height="10" viewBox="0 0 10 10"><rect x="0" y="0" width="10" height="10" fill="#f4f6fa"/><path d="M9.5 0 L9.5 9.5 L0 9.5" fill="none" stroke="#7a8494"/><rect x="2" y="4" width="6" height="1" fill="#2a5a8a"/></svg>
<div style="left:996px;top:499px;font-family:'Liberation Sans';font-size:11px;line-height:11px;color:#000;white-space:pre;letter-spacing:0.156px;">Layout</div>
<div style="left:979px;top:513px;width:377px;height:11px;background:#f5f5f5"></div>
<div style="left:1096px;top:522px;width:31px;height:2px;background:#7eaab8;border-top:1px solid #6a7a88"></div>
<div style="left:1185px;top:522px;width:31px;height:2px;background:#fff;border-top:1px solid #8a8a8a"></div>
<div style="left:1275px;top:522px;width:31px;height:2px;background:#fff;border-top:1px solid #8a8a8a"></div>
<div style="left:1347px;top:513px;width:9px;height:11px;background:linear-gradient(90deg,#f8f8f8,#ececec);border-left:1px solid #e0e0e0"></div>
<svg style="left:1349px;top:517px;" width="7" height="5" viewBox="0 0 7 5"><path d="M0 5 L3.5 0 L7 5 Z" fill="#a8a8a8"/></svg>
</body></html>
